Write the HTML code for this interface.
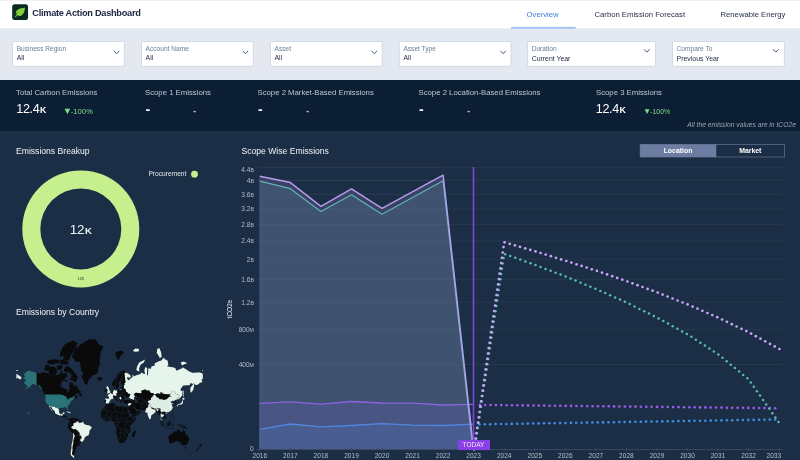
<!DOCTYPE html>
<html lang="en"><head><meta charset="utf-8"><title>Climate Action Dashboard</title>
<style>
*{box-sizing:border-box}
html,body{margin:0;padding:0}
body{width:800px;height:460px;overflow:hidden;position:relative;background:#1b2e45;font-family:"Liberation Sans", sans-serif;color:#fff;-webkit-font-smoothing:antialiased}
.abs{position:absolute}
#top{left:0;top:0;width:800px;height:28px;background:#fff;border-top:1px solid #eef0f4}
#fbar{left:0;top:28px;width:800px;height:52.3px;background:#e4e8f1}
#stat{left:0;top:80px;width:800px;height:51px;background:#0c1e33}
#main{left:0;top:131px;width:800px;height:329px;background:linear-gradient(#20344b 0,#1b2e45 3px,#1b2e45 100%)}
.title{left:32.3px;top:7.7px;font-size:9.2px;font-weight:bold;color:#1b2440;letter-spacing:-0.26px;white-space:nowrap;line-height:11px}
.tab{top:10.35px;font-size:7.7px;color:#27304a;white-space:nowrap;line-height:9px}
.flab{font-size:6.6px;line-height:8px;color:#6c7a9a;white-space:nowrap}
.fval{font-size:6.9px;line-height:8px;color:#1d2742;white-space:nowrap}
.slab{font-size:7.75px;line-height:9px;color:#bfc7d2;white-space:nowrap}
.sval{font-size:12.6px;line-height:16px;color:#fff;white-space:nowrap;letter-spacing:-0.35px}
.sck{font-size:8.8px;letter-spacing:0;font-weight:bold;margin-left:0.5px}
.sdel{font-size:7.6px;line-height:8px;color:#80dc84;white-space:nowrap}
.tri{font-size:9.4px;position:relative;top:-0.5px;margin-left:-1.1px;margin-right:-1.2px}
.note{right:4px;top:120.5px;font-size:6.75px;line-height:8px;font-style:italic;color:#9ba5b3;white-space:nowrap}
.h2{font-size:8.6px;line-height:10px;color:#f2f4f8;white-space:nowrap}
.tick{font-size:6.55px;line-height:8px;color:#b6becb;white-space:nowrap}
.xc{width:30px;text-align:center}
.sc{font-size:5.2px}
.tog{top:145.2px;height:12.6px;font-size:6.9px;font-weight:bold;line-height:12.4px;text-align:center;color:#fff}
#w{position:absolute;left:0;top:0;width:800px;height:460px;overflow:hidden;will-change:transform}
</style></head><body><div id="w">
<div id="top" class="abs"></div>
<div id="fbar" class="abs"></div>
<div id="stat" class="abs"></div>
<div id="main" class="abs"></div>

<svg class="abs" style="left:12px;top:4px" width="17" height="17" viewBox="0 0 17 17"><rect x="0.2" y="0.2" width="15.85" height="15.85" rx="2.5" fill="#0c2a22"/><path d="M13 3.8 C10.2 3.8 5.7 4.8 4.1 7.6 C3.4 8.8 3.7 9.8 4.7 10.4 L3 12.6 L3.7 13.2 L5.5 11.1 C6.7 12.4 8.8 12.3 10.4 10.8 C12.2 9.1 12.8 6.2 13 3.8 Z" fill="#7fd23c"/><path d="M3.9 8.9 L6.6 8.5 L4.4 9.6 Z" fill="#0c2a22"/></svg>
<div class="abs title">Climate Action Dashboard</div>
<div class="abs tab" style="left:526.6px;color:#3f7fd6">Overview</div>
<svg class="abs" style="left:0;top:24px" width="800" height="8" viewBox="0 24 800 8"><rect x="0" y="24" width="800" height="4.3" fill="#fff"/><rect x="511.2" y="26.9" width="64.5" height="1.8" fill="#9cc0f1"/></svg>
<div class="abs tab" style="left:594.5px">Carbon Emission Forecast</div>
<div class="abs tab" style="left:720.5px">Renewable Energy</div>
<svg class="abs" style="left:0;top:36px" width="800" height="36" viewBox="0 36 800 36"><rect x="12.60" y="41.5" width="111.75" height="24.8" rx="0.8" fill="#fff" stroke="#c3cfe0" stroke-width="0.7"/><path d="M114.00 51.10 L116.50 53.70 L119.00 51.10" fill="none" stroke="#44557f" stroke-width="1" stroke-linecap="round" stroke-linejoin="round"/><rect x="141.50" y="41.5" width="111.75" height="24.8" rx="0.8" fill="#fff" stroke="#c3cfe0" stroke-width="0.7"/><path d="M242.90 51.10 L245.40 53.70 L247.90 51.10" fill="none" stroke="#44557f" stroke-width="1" stroke-linecap="round" stroke-linejoin="round"/><rect x="270.40" y="41.5" width="111.75" height="24.8" rx="0.8" fill="#fff" stroke="#c3cfe0" stroke-width="0.7"/><path d="M371.80 51.10 L374.30 53.70 L376.80 51.10" fill="none" stroke="#44557f" stroke-width="1" stroke-linecap="round" stroke-linejoin="round"/><rect x="399.30" y="41.5" width="111.70" height="24.8" rx="0.8" fill="#fff" stroke="#c3cfe0" stroke-width="0.7"/><path d="M500.65 51.10 L503.15 53.70 L505.65 51.10" fill="none" stroke="#44557f" stroke-width="1" stroke-linecap="round" stroke-linejoin="round"/><rect x="527.60" y="41.5" width="127.90" height="24.8" rx="0.8" fill="#fff" stroke="#c3cfe0" stroke-width="0.7"/><path d="M644.40 49.60 L646.90 52.20 L649.40 49.60" fill="none" stroke="#44557f" stroke-width="1" stroke-linecap="round" stroke-linejoin="round"/><rect x="672.50" y="41.5" width="111.90" height="24.8" rx="0.8" fill="#fff" stroke="#c3cfe0" stroke-width="0.7"/><path d="M773.30 49.60 L775.80 52.20 L778.30 49.60" fill="none" stroke="#44557f" stroke-width="1" stroke-linecap="round" stroke-linejoin="round"/></svg><div class="abs flab" style="left:16.7px;top:44.6px">Business Region</div><div class="abs fval" style="left:16.7px;top:54.3px">All</div><div class="abs flab" style="left:145.6px;top:44.6px">Account Name</div><div class="abs fval" style="left:145.6px;top:54.3px">All</div><div class="abs flab" style="left:274.5px;top:44.6px">Asset</div><div class="abs fval" style="left:274.5px;top:54.3px">All</div><div class="abs flab" style="left:403.4px;top:44.6px">Asset Type</div><div class="abs fval" style="left:403.4px;top:54.3px">All</div><div class="abs flab" style="left:531.7px;top:44.6px">Duration</div><div class="abs fval" style="left:531.7px;top:54.8px">Current Year</div><div class="abs flab" style="left:676.6px;top:44.6px">Compare To</div><div class="abs fval" style="left:676.6px;top:54.8px">Previous Year</div>
<div class="abs slab" style="left:16px;top:87.5px">Total Carbon Emissions</div><div class="abs sval" style="left:16.3px;top:101.2px">12.4<span class="sck">K</span></div><div class="abs sdel" style="left:63.8px;top:107.2px;"><span class="tri">&#9660;</span>-100%</div><div class="abs slab" style="left:145px;top:87.5px">Scope 1 Emissions</div><div class="abs sval" style="left:145.5px;top:100.9px;font-weight:bold;font-size:14px;letter-spacing:0;color:#eef1f5">-</div><div class="abs sdel" style="left:193.1px;top:106.3px;font-size:10px;line-height:10px;color:#a9b1bb;font-weight:bold">-</div><div class="abs" style="left:189.5px;top:118px;width:50px;height:1px;background:rgba(255,255,255,0.018)"></div><div class="abs slab" style="left:257.5px;top:87.5px">Scope 2 Market-Based Emissions</div><div class="abs sval" style="left:258.0px;top:100.9px;font-weight:bold;font-size:14px;letter-spacing:0;color:#eef1f5">-</div><div class="abs sdel" style="left:306.1px;top:106.3px;font-size:10px;line-height:10px;color:#a9b1bb;font-weight:bold">-</div><div class="abs" style="left:302.5px;top:118px;width:50px;height:1px;background:rgba(255,255,255,0.018)"></div><div class="abs slab" style="left:418.5px;top:87.5px">Scope 2 Location-Based Emissions</div><div class="abs sval" style="left:419.0px;top:100.9px;font-weight:bold;font-size:14px;letter-spacing:0;color:#eef1f5">-</div><div class="abs sdel" style="left:467.1px;top:106.3px;font-size:10px;line-height:10px;color:#a9b1bb;font-weight:bold">-</div><div class="abs" style="left:463.5px;top:118px;width:50px;height:1px;background:rgba(255,255,255,0.018)"></div><div class="abs slab" style="left:596.0px;top:87.5px">Scope 3 Emissions</div><div class="abs sval" style="left:595.8px;top:101.2px">12.4<span class="sck">K</span></div><div class="abs sdel" style="left:644.1999999999999px;top:107.5px;font-size:6.9px;"><span class="tri" style="font-size:8.2px;top:0.3px;margin-right:-1px">&#9660;</span>-100%</div>
<div class="abs note">All the emission values are in tCO2e</div>

<div class="abs h2" style="left:16px;top:146px">Emissions Breakup</div>
<svg class="abs" style="left:0;top:160px" width="230" height="140" viewBox="0 160 230 140"><path d="M22.299999999999997 228.9 A58.5 58.5 0 1 0 139.3 228.9 A58.5 58.5 0 1 0 22.299999999999997 228.9 Z M40.3 228.9 A40.5 40.5 0 1 0 121.3 228.9 A40.5 40.5 0 1 0 40.3 228.9 Z" fill="#c6f08d" fill-rule="evenodd"/><circle cx="194.5" cy="174.2" r="3.4" fill="#c6f08d"/></svg>
<div class="abs" style="left:50.8px;top:220.9px;width:60px;text-align:center;font-size:13.4px;line-height:17px;color:#f1f3f6;letter-spacing:-0.1px">12<span style="font-size:9.6px;font-weight:bold;margin-left:0.5px">K</span></div>
<div class="abs" style="left:60.8px;top:276.3px;width:40px;text-align:center;font-size:3.9px;line-height:5px;color:#20301a">12<span style="font-size:3.2px">K</span></div>
<div class="abs" style="left:148.4px;top:170.3px;font-size:6.65px;line-height:8px;color:#e4e8ee;white-space:nowrap">Procurement</div>

<div class="abs h2" style="left:16px;top:307px">Emissions by Country</div>
<svg class="abs" style="left:0;top:330px" width="230" height="130" viewBox="0 330 230 130">
<path d="M36.6 372.8 L39.7 373.7 L43.3 372.2 L47.4 373.0 L50.0 374.4 L53.7 375.1 L57.8 375.1 L60.4 373.7 L60.9 369.1 L63.0 373.7 L65.6 373.0 L67.1 373.7 L67.6 376.5 L65.1 377.8 L64.5 379.6 L61.4 382.5 L60.6 385.7 L61.9 387.6 L65.6 389.0 L67.1 389.5 L67.1 391.7 L68.4 392.7 L68.7 390.4 L69.7 388.6 L69.2 386.2 L69.5 382.2 L71.8 382.5 L73.3 383.6 L73.6 385.9 L75.4 386.2 L76.2 384.4 L77.5 387.2 L78.5 389.0 L80.1 390.8 L80.7 392.1 L79.3 392.7 L78.5 393.6 L75.4 393.6 L73.9 394.9 L75.9 394.6 L76.2 395.7 L78.0 396.9 L76.4 398.0 L75.4 398.7 L74.9 397.6 L73.3 398.7 L73.1 399.9 L71.3 400.8 L70.5 402.4 L70.2 404.1 L68.9 405.1 L67.6 406.5 L68.0 409.2 L67.9 410.3 L67.2 409.5 L66.7 408.0 L65.8 407.4 L64.0 407.3 L63.0 407.9 L60.9 407.7 L59.3 408.9 L59.2 409.9 L58.9 411.8 L59.9 413.7 L60.6 414.2 L62.5 413.9 L62.7 412.6 L64.5 412.3 L64.3 414.0 L63.6 415.4 L66.1 415.5 L66.5 415.9 L66.2 418.0 L66.9 419.1 L68.4 418.8 L69.5 419.3 L69.2 419.9 L67.9 420.0 L66.6 419.4 L65.2 418.3 L64.3 417.0 L62.2 416.4 L60.6 415.2 L59.4 415.4 L57.3 414.6 L55.0 413.2 L55.0 411.8 L53.7 410.2 L52.4 408.9 L51.1 406.7 L50.1 406.4 L50.2 407.4 L51.3 409.2 L52.6 410.9 L52.9 411.5 L51.6 410.4 L50.3 408.6 L49.5 407.1 L48.9 405.9 L48.2 405.0 L47.1 404.6 L46.4 403.2 L45.5 401.4 L45.2 399.7 L45.4 396.9 L45.0 395.0 L45.9 394.6 L44.8 393.8 L43.6 392.9 L43.3 391.3 L42.1 389.8 L41.7 389.0 L40.4 387.6 L38.9 386.4 L37.1 384.9 L35.0 384.7 L32.9 384.1 L31.1 385.4 L29.8 387.2 L27.8 388.1 L25.7 389.5 L24.1 389.9 L25.7 388.6 L27.8 386.2 L25.7 384.7 L23.9 383.1 L24.6 381.4 L26.2 380.2 L23.6 378.4 L22.6 378.3 L24.6 377.1 L25.2 376.5 L23.6 374.4 L25.7 372.2 L28.5 370.2 L31.9 371.5Z" fill="#0a0a0a"/>
<path d="M45.9 394.6 L60.4 394.6 L63.5 395.3 L65.8 396.5 L66.9 397.4 L66.9 399.2 L68.7 399.2 L68.7 398.7 L70.0 398.3 L70.9 397.6 L72.6 397.6 L73.8 395.8 L74.5 396.1 L74.9 397.6 L73.3 398.7 L73.1 399.9 L71.3 400.8 L70.5 402.4 L70.2 404.1 L68.9 405.1 L67.6 406.5 L68.0 409.2 L67.9 410.3 L67.2 409.5 L66.7 408.0 L65.8 407.4 L64.0 407.3 L63.0 407.9 L60.9 407.7 L59.3 408.9 L59.2 409.9 L58.1 408.9 L57.0 407.6 L56.2 408.0 L55.5 407.7 L54.4 406.4 L53.6 406.4 L53.6 406.7 L52.1 406.7 L50.1 405.9 L48.9 405.9 L48.2 405.0 L47.1 404.6 L46.4 403.2 L45.5 401.4 L45.2 399.7 L45.4 396.9 L45.0 395.0Z" fill="#2a7479"/>
<path d="M36.6 372.8 L36.6 384.4 L37.6 384.7 L38.4 385.8 L39.7 385.2 L42.1 389.0 L41.7 389.5 L40.4 387.6 L38.9 386.4 L37.1 384.9 L35.0 384.7 L32.9 384.1 L31.1 385.4 L29.8 387.2 L27.8 388.1 L25.7 389.5 L24.1 389.9 L25.7 388.6 L27.8 386.2 L25.7 384.7 L23.9 383.1 L24.6 381.4 L26.2 380.2 L23.6 378.4 L22.6 378.3 L24.6 377.1 L25.2 376.5 L23.6 374.4 L25.7 372.2 L28.5 370.2 L31.9 371.5Z" fill="#2a7479"/>
<path d="M28.0 412.3 L29.3 412.9 L29.8 413.7 L28.5 414.0 L27.5 412.9Z" fill="#2a7479"/>
<path d="M27.6 412.3 L28.0 412.2 L28.0 412.5 L27.7 412.5Z" fill="#2a7479"/>
<path d="M48.9 405.9 L50.1 405.9 L52.1 406.7 L53.6 406.7 L53.6 406.4 L54.4 406.4 L55.5 407.7 L56.2 408.0 L57.0 407.6 L58.1 408.9 L59.2 409.9 L58.9 411.8 L59.9 413.7 L60.6 414.2 L62.5 413.9 L62.7 412.6 L64.5 412.3 L64.3 414.0 L63.9 414.1 L63.4 414.3 L62.5 414.7 L62.7 415.3 L61.8 416.1 L60.6 415.2 L59.4 415.4 L57.3 414.6 L55.0 413.2 L55.0 411.8 L53.7 410.2 L52.4 408.9 L51.1 406.7 L50.1 406.4 L50.2 407.4 L51.3 409.2 L52.6 410.9 L52.9 411.5 L51.6 410.4 L50.3 408.6 L49.5 407.1Z" fill="#e6f5ec"/>
<path d="M68.2 366.1 L70.8 368.2 L74.4 372.2 L77.5 376.5 L77.7 377.8 L75.9 382.0 L74.4 382.0 L72.3 380.2 L69.2 379.6 L71.3 377.8 L71.8 375.1 L69.2 372.2 L65.6 372.2 L63.5 370.7 L65.6 366.4Z" fill="#0a0a0a"/>
<path d="M48.5 370.2 L50.5 367.0 L53.7 366.6 L55.7 368.2 L57.3 372.2 L55.7 374.4 L51.6 374.9 L49.0 373.4Z" fill="#0a0a0a"/>
<path d="M44.3 369.1 L45.9 364.6 L49.5 365.5 L50.0 368.2 L48.0 370.4 L45.4 370.7Z" fill="#0a0a0a"/>
<path d="M63.0 360.4 L69.2 360.4 L70.8 355.6 L75.9 348.3 L77.5 342.9 L73.3 340.4 L65.6 343.7 L61.9 348.3 L64.0 354.3Z" fill="#0a0a0a"/>
<path d="M59.9 363.6 L61.9 364.4 L68.2 364.2 L68.4 361.9 L63.0 359.7 L59.9 360.4Z" fill="#0a0a0a"/>
<path d="M47.4 363.2 L51.6 364.4 L55.7 363.6 L58.8 363.6 L59.9 360.4 L55.7 359.3 L50.0 359.7 L47.4 360.9Z" fill="#0a0a0a"/>
<path d="M59.9 356.9 L64.0 355.6 L63.0 348.3 L60.4 351.4Z" fill="#0a0a0a"/>
<path d="M56.8 369.4 L59.9 369.9 L61.9 368.2 L62.5 365.5 L59.9 364.9 L56.8 365.9Z" fill="#0a0a0a"/>
<path d="M65.1 379.0 L67.6 380.2 L66.3 382.0 L64.5 380.8Z" fill="#0a0a0a"/>
<path d="M78.9 395.6 L80.9 396.3 L82.1 396.3 L82.3 394.9 L80.9 393.8 L80.6 392.5 L79.8 393.3Z" fill="#0a0a0a"/>
<path d="M71.8 356.4 L75.4 349.0 L81.1 344.0 L88.9 339.5 L95.1 339.1 L99.2 344.8 L103.4 346.6 L100.8 351.4 L99.8 359.3 L100.0 363.6 L98.2 368.2 L98.2 371.5 L96.1 374.4 L93.0 375.1 L90.4 378.0 L88.9 379.0 L87.3 384.5 L86.3 384.7 L84.7 383.6 L83.2 380.2 L81.6 376.5 L83.2 373.0 L81.1 370.7 L80.6 365.5 L79.6 362.1 L75.4 361.5 L73.9 359.3Z" fill="#0a0a0a"/>
<path d="M97.2 378.4 L98.2 377.3 L101.3 377.1 L102.6 378.8 L101.3 380.2 L99.2 380.8 L97.8 380.2Z" fill="#0a0a0a"/>
<path d="M65.6 412.1 L68.2 411.4 L70.8 412.8 L71.2 413.1 L69.4 413.2 L68.2 412.2Z" fill="#e6f5ec"/>
<path d="M71.1 414.0 L72.3 413.2 L74.2 413.9 L72.8 414.4Z" fill="#0a0a0a" fill-opacity="0.6"/>
<path d="M69.5 419.3 L70.2 418.8 L70.8 418.0 L72.3 417.4 L73.3 417.6 L74.4 418.2 L76.4 418.3 L77.5 418.2 L78.5 419.3 L80.1 420.6 L81.6 420.7 L82.9 421.5 L83.7 422.8 L83.7 423.8 L84.7 424.2 L86.5 425.0 L88.9 425.2 L90.4 426.3 L91.5 426.6 L91.6 427.9 L90.4 429.7 L89.4 430.8 L89.4 433.0 L88.4 435.4 L86.5 436.1 L84.5 437.7 L84.4 439.2 L82.7 441.6 L81.9 442.5 L80.3 443.0 L79.3 442.5 L80.1 444.1 L79.6 445.4 L77.5 445.7 L77.2 447.1 L75.9 447.1 L76.4 448.3 L75.7 449.9 L74.6 450.6 L75.4 452.2 L73.9 454.6 L74.1 455.8 L75.7 457.8 L74.4 458.6 L72.8 457.1 L71.3 455.8 L70.5 453.7 L70.8 451.4 L71.5 447.8 L71.4 445.1 L72.3 441.9 L72.6 440.1 L73.1 437.1 L73.2 433.4 L72.0 432.6 L70.1 431.1 L69.2 429.2 L67.5 426.1 L68.2 425.5 L67.6 424.3 L68.2 423.3 L68.8 423.0 L69.6 421.7 L69.5 420.1Z" fill="#0a0a0a"/>
<path d="M82.9 421.5 L83.7 422.8 L83.7 423.8 L84.7 424.2 L86.5 425.0 L88.9 425.2 L90.4 426.3 L91.5 426.6 L91.6 427.9 L90.4 429.7 L89.4 430.8 L89.4 433.0 L88.4 435.4 L86.5 436.1 L84.5 437.7 L84.4 439.2 L82.7 441.6 L81.9 442.3 L79.8 440.2 L80.7 439.0 L81.7 438.3 L81.3 437.5 L81.5 436.6 L80.8 435.6 L79.6 435.4 L79.6 434.3 L79.8 433.2 L79.3 432.3 L78.4 432.3 L78.3 431.0 L77.5 430.5 L75.8 429.5 L75.7 428.8 L73.6 429.5 L73.0 428.7 L71.8 428.6 L71.3 427.6 L71.8 426.3 L73.3 426.0 L73.4 424.4 L73.6 423.2 L74.9 422.8 L76.4 422.6 L76.2 421.6 L78.0 421.4 L78.4 421.1 L78.6 422.7 L80.1 422.8 L81.6 422.6 L82.7 421.8Z" fill="#e6f5ec"/>
<path d="M73.2 433.4 L73.1 437.1 L72.6 440.1 L72.3 441.9 L71.4 445.1 L71.5 447.8 L70.8 451.4 L70.5 453.7 L71.3 455.8 L72.8 457.1 L74.4 458.6 L74.1 455.8 L72.3 455.0 L72.0 452.9 L72.6 449.9 L72.4 447.8 L72.8 445.1 L73.3 443.1 L73.3 440.7 L74.1 438.3 L74.4 436.8 L74.9 435.9 L74.1 434.3 L73.6 433.0Z" fill="#e6f5ec"/>
<path d="M106.5 403.9 L108.6 404.3 L111.2 403.2 L114.8 402.9 L114.9 405.1 L117.6 406.1 L119.7 407.3 L120.0 405.9 L121.5 405.8 L122.5 406.5 L124.6 406.9 L126.3 406.7 L127.3 406.7 L127.7 407.7 L127.2 408.6 L127.0 408.6 L126.5 407.5 L128.0 410.9 L128.8 412.6 L128.9 413.8 L130.1 415.6 L132.0 417.2 L132.0 417.8 L132.9 418.3 L136.1 417.6 L135.9 418.8 L134.5 421.4 L133.2 422.7 L131.4 424.3 L130.6 425.0 L129.9 426.3 L130.1 427.4 L130.6 429.2 L130.6 431.6 L128.0 434.3 L128.0 436.6 L126.7 437.6 L126.6 439.2 L125.4 440.7 L123.6 442.4 L120.0 443.0 L119.1 442.5 L118.7 440.1 L117.4 438.0 L117.1 435.4 L115.7 432.7 L116.6 430.0 L116.0 426.9 L114.5 425.0 L114.4 423.2 L114.6 421.7 L112.7 421.5 L111.7 420.4 L110.1 420.6 L108.6 421.3 L105.7 421.5 L103.6 420.2 L102.7 419.1 L101.8 418.0 L100.9 417.2 L100.5 416.1 L101.2 415.1 L101.1 413.4 L100.8 412.6 L101.3 411.2 L102.1 409.8 L103.1 408.6 L104.4 407.7 L104.6 406.5 L106.1 405.0Z" fill="#0a0a0a"/>
<path d="M135.1 430.0 L135.8 431.9 L135.2 433.2 L134.2 437.1 L132.9 437.4 L132.1 436.0 L132.4 434.1 L132.7 432.3 L133.9 431.3Z" fill="#0a0a0a"/>
<path d="M104.9 403.1 L104.7 402.0 L105.0 400.1 L104.8 398.9 L105.5 398.5 L108.7 398.7 L109.0 396.9 L107.2 395.0 L108.8 394.9 L108.6 394.0 L109.7 394.0 L110.4 393.0 L111.4 392.6 L112.1 391.3 L113.2 390.7 L114.1 390.5 L113.8 389.0 L113.8 387.6 L115.0 387.0 L114.9 388.6 L114.7 389.5 L115.3 390.4 L117.0 390.4 L119.2 389.8 L119.9 390.0 L120.5 389.2 L120.5 387.6 L121.0 387.1 L121.8 387.6 L122.2 386.4 L121.8 385.5 L124.1 385.2 L125.1 384.7 L124.4 384.1 L122.5 384.5 L121.3 384.7 L120.6 383.6 L120.7 381.4 L122.5 379.0 L122.0 378.0 L121.0 378.4 L120.5 380.2 L118.7 382.5 L118.5 383.9 L119.3 384.7 L118.9 385.7 L118.1 387.6 L117.9 388.4 L117.0 389.1 L116.2 389.1 L116.1 388.3 L115.4 386.3 L115.3 385.7 L115.0 385.4 L114.5 385.9 L113.7 386.6 L113.0 386.6 L112.4 385.7 L112.2 383.6 L112.3 382.3 L114.0 380.8 L115.0 379.6 L116.1 377.8 L117.1 375.5 L117.9 374.3 L119.2 372.5 L121.0 371.8 L122.9 370.5 L124.1 370.7 L125.7 371.6 L125.6 372.5 L126.7 373.1 L128.2 373.4 L130.6 375.4 L130.8 376.9 L129.5 377.8 L127.0 376.9 L127.6 379.6 L128.8 380.4 L129.3 379.3 L130.3 379.5 L130.6 378.0 L132.4 377.5 L132.7 374.4 L133.4 375.1 L133.9 376.6 L137.3 374.7 L137.6 374.9 L140.7 373.7 L141.2 372.5 L143.3 373.4 L144.3 374.0 L145.1 373.7 L144.3 370.7 L145.1 367.3 L147.2 367.7 L147.2 370.7 L146.9 374.4 L147.9 375.8 L148.4 368.2 L151.0 368.7 L151.3 366.4 L154.7 365.5 L154.7 363.2 L158.8 361.3 L161.4 360.4 L163.5 357.6 L165.0 359.3 L167.6 360.4 L168.4 365.5 L166.6 365.9 L168.1 366.4 L170.7 367.0 L173.3 367.3 L175.4 368.2 L176.4 370.7 L178.0 369.9 L182.1 368.2 L182.6 367.3 L187.3 369.9 L188.3 370.9 L192.5 372.7 L193.5 372.8 L197.7 372.5 L198.2 372.2 L200.8 372.7 L202.8 373.7 L202.8 379.0 L202.1 379.6 L201.3 379.4 L202.6 382.0 L199.7 382.9 L197.9 384.7 L195.6 384.9 L194.3 383.6 L194.0 386.7 L193.5 388.6 L193.4 389.7 L192.5 391.1 L191.6 392.1 L190.8 392.9 L190.3 391.3 L190.3 388.1 L190.9 386.9 L192.4 385.2 L194.0 383.1 L192.5 383.9 L190.8 382.9 L189.6 385.2 L187.3 385.2 L184.7 385.4 L183.4 385.4 L182.1 386.9 L180.8 388.8 L180.6 390.4 L182.1 391.1 L182.8 391.3 L182.3 393.8 L182.4 394.9 L181.3 396.5 L179.8 398.3 L178.5 399.2 L177.3 399.5 L176.8 400.1 L175.6 401.2 L176.6 402.8 L176.6 404.1 L175.6 404.6 L175.0 404.6 L175.1 403.1 L174.3 402.4 L174.1 401.1 L172.7 400.6 L172.4 401.8 L172.9 400.8 L171.2 401.6 L170.6 402.0 L171.2 402.9 L173.1 403.0 L171.5 404.4 L172.3 405.9 L172.7 406.8 L172.8 407.7 L171.8 409.8 L170.5 411.1 L168.7 411.9 L166.8 412.5 L165.8 412.3 L164.5 413.4 L164.4 414.0 L166.0 415.6 L166.2 417.5 L165.0 418.3 L164.0 419.2 L164.0 418.5 L163.0 417.9 L161.9 416.9 L161.4 416.8 L161.0 418.3 L161.7 420.0 L163.2 421.7 L163.4 423.0 L162.1 422.3 L161.6 420.9 L160.5 419.3 L160.7 417.5 L160.2 415.6 L159.8 414.9 L158.4 415.4 L158.4 414.0 L157.3 412.6 L157.2 411.9 L155.7 412.2 L154.7 412.5 L154.4 413.2 L153.1 414.0 L151.1 415.7 L151.1 417.0 L150.9 418.4 L150.0 419.4 L149.6 419.5 L149.0 418.3 L148.3 416.7 L147.4 414.0 L147.3 412.6 L145.9 412.7 L145.3 411.9 L144.5 410.7 L144.0 410.2 L141.5 410.3 L139.3 410.0 L139.0 409.2 L137.6 409.4 L136.0 408.7 L135.5 407.4 L134.8 407.3 L134.5 407.6 L134.7 408.3 L135.5 409.4 L135.6 410.0 L136.3 409.9 L136.3 410.7 L137.6 410.9 L138.6 409.8 L138.9 410.7 L140.6 411.8 L139.9 413.0 L139.5 413.8 L138.2 414.5 L136.5 415.4 L134.7 416.4 L132.9 417.1 L132.1 417.1 L131.7 415.9 L131.6 415.1 L130.3 413.2 L129.5 411.2 L128.8 410.1 L127.7 408.6 L127.7 407.7 L127.4 406.7 L127.7 405.6 L128.1 404.1 L128.2 403.2 L127.5 403.3 L126.4 403.7 L125.4 403.4 L124.6 403.5 L123.8 403.1 L123.3 402.1 L123.3 401.1 L122.0 400.6 L121.5 400.9 L121.4 401.6 L122.0 402.4 L121.5 403.4 L120.8 403.2 L120.5 402.1 L119.7 400.8 L119.7 399.9 L119.2 399.4 L117.9 398.7 L117.1 397.4 L116.7 397.1 L116.0 397.4 L116.1 398.3 L116.9 399.4 L117.9 399.9 L119.1 401.0 L118.4 400.8 L118.1 401.4 L118.4 401.8 L117.9 402.4 L117.7 402.4 L117.9 401.1 L117.1 400.6 L116.1 400.1 L115.0 399.1 L114.9 398.4 L114.2 398.0 L113.5 398.5 L112.7 399.0 L111.9 398.7 L111.2 398.9 L111.3 399.8 L110.0 400.5 L109.5 401.4 L109.6 402.0 L109.2 402.6 L108.6 403.2 L107.3 403.4 L106.8 403.7 L106.3 403.2 L105.8 403.0 L104.9 403.1Z" fill="#0a0a0a"/>
<path d="M125.6 372.5 L126.7 373.1 L128.2 373.4 L130.6 375.4 L130.8 376.9 L129.5 377.8 L127.0 376.9 L127.6 379.6 L128.8 380.4 L129.3 379.3 L130.3 379.5 L130.6 378.0 L132.4 377.5 L132.7 374.4 L133.4 375.1 L133.9 376.6 L137.3 374.7 L137.6 374.9 L140.7 373.7 L141.2 372.5 L143.3 373.4 L144.3 374.0 L145.1 373.7 L144.3 370.7 L145.1 367.3 L147.2 367.7 L147.2 370.7 L146.9 374.4 L147.9 375.8 L148.4 368.2 L151.0 368.7 L151.3 366.4 L154.7 365.5 L154.7 363.2 L158.8 361.3 L161.4 360.4 L163.5 357.6 L165.0 359.3 L167.6 360.4 L168.4 365.5 L166.6 365.9 L168.1 366.4 L170.7 367.0 L173.3 367.3 L175.4 368.2 L176.4 370.7 L178.0 369.9 L182.1 368.2 L182.6 367.3 L187.3 369.9 L188.3 370.9 L192.5 372.7 L193.5 372.8 L197.7 372.5 L198.2 372.2 L200.8 372.7 L202.8 373.7 L202.8 379.0 L202.1 379.6 L201.3 379.4 L202.6 382.0 L199.7 382.9 L197.9 384.7 L195.6 384.9 L194.3 383.6 L194.0 386.7 L193.5 388.6 L193.4 389.7 L192.5 391.1 L191.6 392.1 L190.8 392.9 L190.3 391.3 L190.3 388.1 L190.9 386.9 L192.4 385.2 L194.0 383.1 L192.5 383.9 L190.8 382.9 L189.6 385.2 L187.3 385.2 L184.7 385.4 L183.4 385.4 L182.1 386.9 L180.8 388.8 L180.6 390.4 L182.1 391.1 L182.8 391.3 L182.3 393.8 L182.4 394.9 L181.3 396.5 L179.8 398.3 L178.5 399.2 L177.3 399.5 L177.3 399.5 L177.5 399.2 L177.6 397.7 L178.6 397.6 L179.5 395.0 L177.2 394.6 L175.6 393.8 L174.9 391.7 L173.6 390.8 L172.2 391.0 L171.7 391.4 L170.1 393.9 L167.6 394.2 L165.0 394.0 L162.4 393.5 L162.6 392.7 L160.5 392.1 L160.4 393.8 L157.3 393.2 L154.8 394.4 L152.9 392.9 L151.0 393.1 L149.5 390.9 L149.2 390.1 L147.7 390.4 L146.4 390.2 L145.3 389.2 L143.3 389.9 L141.4 390.4 L141.1 391.3 L141.5 392.1 L141.2 393.2 L139.6 392.9 L137.8 392.9 L135.9 392.4 L134.8 393.8 L134.2 393.5 L133.8 394.3 L133.9 395.1 L134.7 395.5 L135.0 396.5 L134.5 396.9 L133.9 398.0 L134.2 399.0 L134.7 399.9 L133.7 399.9 L132.9 399.4 L131.6 398.9 L130.2 398.7 L129.0 397.8 L128.8 397.4 L129.8 395.9 L129.4 396.0 L130.2 395.5 L130.3 394.1 L129.3 393.8 L128.0 393.4 L127.3 391.9 L126.4 391.9 L125.9 391.1 L125.6 388.9 L124.2 388.4 L123.8 387.2 L124.1 385.2 L125.1 384.7 L124.4 384.1 L124.0 384.1 L124.9 383.3 L125.9 381.5 L125.0 380.0 L125.2 378.2 L124.7 376.8 L125.1 375.7 L124.4 374.9 L124.6 373.7Z" fill="#e6f5ec"/>
<path d="M119.9 390.0 L120.5 389.2 L121.4 389.6 L121.3 390.1Z" fill="#e6f5ec"/>
<path d="M16.4 373.7 L17.9 374.7 L20.5 376.5 L21.7 377.8 L20.2 379.6 L18.9 378.7 L17.4 377.8 L16.4 379.0Z" fill="#e6f5ec"/>
<path d="M136.3 369.9 L137.1 366.4 L139.1 362.6 L142.2 360.9 L145.1 359.5 L143.8 362.6 L140.7 364.6 L139.1 368.2 L139.4 371.2 L138.1 371.2 L137.1 370.4Z" fill="#e6f5ec"/>
<path d="M157.3 349.0 L159.3 348.0 L161.1 352.3 L161.7 357.1 L159.8 357.9 L158.0 354.8 L156.7 352.9Z" fill="#e6f5ec"/>
<path d="M180.6 362.6 L183.7 361.5 L187.3 363.2 L184.7 364.0 L182.1 365.5Z" fill="#e6f5ec"/>
<path d="M202.1 369.9 L202.8 369.9 L202.8 371.0 L202.1 371.0Z" fill="#e6f5ec"/>
<path d="M183.2 390.1 L183.8 391.3 L183.9 393.8 L183.7 395.3 L183.9 396.3 L183.2 396.9 L183.2 395.3 L183.2 392.9Z" fill="#e6f5ec"/>
<path d="M132.9 350.5 L135.5 348.6 L139.1 349.0 L138.6 351.4 L134.5 351.7Z" fill="#e6f5ec"/>
<path d="M115.3 352.9 L117.4 351.4 L122.5 350.5 L123.6 352.9 L120.5 356.1 L118.9 359.3 L117.4 360.0 L116.3 356.9Z" fill="#0a0a0a"/>
<path d="M124.1 400.1 L125.7 400.3 L127.7 399.7 L129.5 400.4 L131.1 400.1 L131.1 399.2 L129.8 398.3 L128.8 397.4 L129.8 395.9 L127.7 396.7 L128.0 397.6 L127.0 398.0 L126.4 397.2 L125.6 396.5 L124.9 397.4 L124.4 398.5 L124.1 399.4Z" fill="#1c2d44"/>
<path d="M135.0 396.6 L136.0 396.1 L137.1 396.3 L137.1 397.4 L136.0 398.0 L135.8 399.4 L136.8 399.4 L137.0 400.3 L137.6 400.8 L137.1 401.8 L137.6 402.9 L136.3 403.3 L135.0 402.8 L135.0 401.8 L135.2 400.8 L134.5 399.7 L133.9 398.5 L133.9 397.6Z" fill="#1c2d44"/>
<path d="M106.8 393.8 L107.8 393.5 L110.3 392.8 L110.5 391.5 L109.7 391.3 L109.5 390.1 L108.7 388.9 L108.6 387.0 L107.5 387.1 L108.0 386.1 L107.0 386.1 L106.4 387.6 L106.8 389.0 L107.1 389.7 L108.0 389.7 L107.9 391.0 L107.2 391.0 L107.4 391.9 L106.9 392.3 L107.8 392.6Z" fill="#e6f5ec"/>
<path d="M104.4 392.3 L106.3 391.9 L106.5 390.8 L106.8 389.9 L106.4 389.3 L105.5 389.3 L104.4 390.2 L104.7 391.3Z" fill="#0a0a0a"/>
<path d="M108.7 398.7 L109.0 396.9 L107.2 395.0 L108.8 394.9 L108.6 394.0 L109.7 394.0 L110.4 393.0 L110.9 392.9 L111.8 393.8 L112.7 394.2 L113.8 394.6 L113.5 395.6 L112.7 396.6 L113.2 396.9 L113.2 398.2 L113.5 398.5 L112.7 399.0 L111.9 398.7 L111.2 398.9 L111.3 399.5 L110.4 399.4Z" fill="#e6f5ec"/>
<path d="M104.8 398.9 L105.5 398.5 L108.7 398.7 L110.4 399.4 L111.3 399.5 L111.3 399.8 L110.0 400.5 L109.5 401.4 L109.6 402.0 L109.2 402.6 L108.6 403.2 L107.3 403.4 L106.8 403.7 L106.3 403.2 L105.8 403.0 L105.7 402.4 L106.0 401.4 L106.2 400.1 L105.4 399.7Z" fill="#e6f5ec"/>
<path d="M112.7 392.9 L113.2 390.7 L114.1 390.5 L114.1 389.6 L114.7 389.7 L115.3 390.4 L117.0 390.4 L117.2 391.7 L117.4 392.9 L115.9 393.5 L116.7 394.8 L116.3 395.7 L114.8 395.8 L113.5 395.6 L113.8 394.6 L112.8 394.2Z" fill="#e6f5ec"/>
<path d="M119.4 397.0 L120.5 396.8 L121.4 398.0 L121.2 399.4 L120.2 399.5 L119.6 398.7Z" fill="#e6f5ec"/>
<path d="M128.1 403.9 L128.6 403.2 L131.5 403.0 L130.8 404.7 L129.7 405.4 L128.2 406.0Z" fill="#e6f5ec"/>
<path d="M144.9 411.2 L145.9 412.7 L147.3 412.6 L147.4 414.0 L148.3 416.7 L149.0 418.3 L149.6 419.5 L150.0 419.4 L150.9 418.4 L151.1 417.0 L151.1 415.7 L153.1 414.0 L154.4 413.2 L154.7 412.5 L155.7 412.2 L155.6 410.7 L155.3 409.5 L156.1 409.5 L157.3 409.3 L159.3 408.5 L159.8 408.7 L158.8 409.5 L157.9 410.9 L157.4 411.2 L157.0 410.7 L156.1 410.1 L155.2 408.9 L155.2 409.6 L153.6 409.4 L151.1 408.2 L151.6 407.3 L150.4 406.7 L150.3 405.9 L150.8 405.6 L150.0 404.1 L148.2 404.7 L147.9 405.6 L148.6 406.1 L148.1 406.8 L147.4 407.7 L146.1 408.6 L145.6 409.3 L146.0 410.1Z" fill="#e2f1e9"/>
<path d="M147.7 401.4 L148.4 400.8 L151.0 399.7 L151.1 397.6 L152.3 397.4 L152.6 395.9 L154.0 395.1 L154.8 394.4 L156.7 397.2 L159.1 398.2 L159.3 399.2 L161.9 399.3 L164.0 399.9 L166.6 399.2 L167.5 398.5 L168.5 397.6 L169.9 396.6 L171.7 396.3 L169.5 395.3 L170.1 393.9 L171.7 391.4 L172.2 391.0 L173.6 390.8 L174.9 391.7 L175.6 393.8 L177.2 394.6 L179.5 395.0 L178.6 397.6 L177.6 397.7 L177.5 399.2 L177.2 399.4 L175.9 399.7 L174.9 400.4 L174.0 401.1 L172.7 400.6 L172.4 401.8 L172.9 400.8 L171.2 401.6 L170.6 402.0 L171.2 402.9 L173.1 403.0 L171.5 404.4 L172.3 405.9 L172.7 406.8 L172.8 407.7 L171.8 409.8 L170.5 411.1 L168.7 411.9 L166.8 412.5 L165.8 412.3 L165.0 412.1 L164.2 411.4 L162.5 411.8 L162.1 412.5 L161.0 412.1 L160.8 410.9 L160.2 410.7 L160.7 408.9 L160.0 408.5 L159.3 408.0 L158.8 407.9 L157.3 408.7 L155.7 409.0 L155.6 408.6 L154.1 408.6 L151.8 407.3 L150.4 406.5 L150.7 405.9 L150.2 404.7 L150.0 404.1 L149.0 403.4 L148.3 403.0 L148.2 402.1Z" fill="#dcede4"/>
<path d="M166.1 413.2 L167.1 413.2 L166.7 414.1 L165.9 413.8Z" fill="#dcede4"/>
<path d="M172.3 410.3 L172.8 410.4 L172.2 412.1 L171.9 411.4Z" fill="#0a0a0a" fill-opacity="0.6"/>
<path d="M177.2 406.7 L177.9 405.3 L178.2 404.8 L179.5 404.7 L180.6 404.6 L181.6 404.4 L182.5 403.7 L183.1 401.8 L182.8 400.2 L182.1 400.4 L182.0 401.8 L181.3 402.9 L180.5 403.0 L180.0 403.9 L178.5 404.1 L177.5 404.8 L176.7 405.5Z" fill="#e6f5ec"/>
<path d="M182.1 399.7 L182.9 397.4 L184.9 398.7 L183.8 399.7 L182.6 399.4Z" fill="#e6f5ec"/>
<path d="M151.0 418.6 L152.0 419.9 L151.3 420.6 L150.9 419.9Z" fill="#0a0a0a" fill-opacity="0.7"/>
<path d="M159.0 420.9 L160.4 421.7 L163.2 424.3 L164.5 425.6 L164.4 426.8 L163.7 426.8 L161.9 425.0 L160.6 423.0Z" fill="#0a0a0a" fill-opacity="0.75"/>
<path d="M164.1 427.3 L165.8 427.2 L167.1 427.1 L168.9 427.8 L168.8 428.2 L165.5 427.8Z" fill="#0a0a0a" fill-opacity="0.6"/>
<path d="M166.1 423.0 L167.3 423.0 L168.1 422.1 L169.9 420.2 L171.2 421.0 L170.6 421.9 L170.7 423.2 L170.2 424.3 L169.7 425.7 L168.9 425.8 L167.4 425.5 L166.6 424.5 L166.1 423.6Z" fill="#0a0a0a" fill-opacity="0.85"/>
<path d="M171.5 423.5 L172.3 423.1 L174.3 423.0 L173.6 423.6 L172.3 423.5 L172.5 424.3 L173.5 424.3 L172.8 425.6 L173.2 426.3 L172.0 426.6 L171.5 425.6 L171.2 424.3Z" fill="#0a0a0a" fill-opacity="0.55"/>
<path d="M177.5 424.2 L179.0 424.2 L179.7 425.5 L181.1 424.6 L182.6 425.1 L184.7 426.0 L186.0 426.9 L186.3 428.1 L187.6 429.2 L185.7 428.9 L184.2 427.8 L183.2 428.5 L181.1 428.1 L181.1 426.9 L179.5 426.0 L178.5 425.8 L178.0 425.2Z" fill="#0a0a0a" fill-opacity="0.7"/>
<path d="M172.0 414.0 L172.9 414.1 L172.8 415.4 L173.8 417.0 L172.5 416.5 L171.9 416.0 L171.8 415.2Z" fill="#0a0a0a" fill-opacity="0.5"/>
<path d="M172.8 420.1 L173.8 419.3 L175.0 419.1 L175.0 420.5 L174.5 420.6 L173.8 420.4Z" fill="#0a0a0a" fill-opacity="0.5"/>
<path d="M172.8 417.6 L173.8 417.8 L174.6 418.0 L174.3 418.5 L173.3 418.8 L172.8 418.3Z" fill="#0a0a0a" fill-opacity="0.35"/>
<path d="M170.7 428.2 L173.3 428.1 L175.4 428.2 L173.8 429.1 L171.2 428.7Z" fill="#0a0a0a" fill-opacity="0.35"/>
<path d="M168.7 435.4 L168.4 437.7 L169.2 442.5 L170.7 443.1 L173.6 442.5 L176.4 441.1 L179.0 441.6 L181.0 443.5 L182.1 445.1 L184.5 445.3 L185.7 445.6 L187.3 444.6 L188.0 442.4 L189.1 439.2 L188.9 437.4 L187.0 435.4 L185.4 433.8 L185.0 431.5 L183.4 429.4 L182.9 430.8 L182.5 433.0 L180.6 432.0 L179.9 431.5 L180.5 430.1 L178.2 429.7 L177.2 430.3 L176.4 431.6 L174.3 431.3 L172.9 433.0 L171.2 434.3Z" fill="#0a0a0a"/>
<path d="M184.6 446.9 L186.4 447.0 L186.3 448.6 L185.2 448.9Z" fill="#0a0a0a" fill-opacity="0.8"/>
<path d="M199.1 442.8 L200.5 444.1 L202.1 444.9 L201.3 446.1 L200.4 447.5 L200.1 446.3 L199.6 445.9 L200.1 444.7Z" fill="#0a0a0a" fill-opacity="0.8"/>
<path d="M199.1 446.7 L199.9 447.6 L198.2 449.5 L197.9 450.6 L196.8 451.1 L195.8 450.5 L196.9 449.2 L198.2 448.0Z" fill="#0a0a0a" fill-opacity="0.8"/>
<path d="M16.4 369.9 L17.7 369.9 L17.7 371.0 L16.4 371.0Z" fill="#e6f5ec"/>
<path d="M160.7 418.5 L160.9 417.0 L160.5 415.7 L160.7 414.8 L160.3 414.0 L161.4 413.0 L161.9 414.4 L162.4 414.3 L163.5 414.1 L163.9 415.1 L164.2 416.2 L163.0 416.3 L162.7 417.2 L162.9 417.6 L161.9 416.9 L161.4 416.8 L161.0 418.3 L161.7 420.0 L162.4 420.6 L161.5 420.4 L160.5 419.3Z" fill="#e6f5ec"/>
<path d="M108.6 404.3 L108.8 406.2 L107.0 407.4 L105.1 408.2 L105.1 409.0" fill="none" stroke="#22405c" stroke-width="0.35" stroke-opacity="0.9"/>
<path d="M105.1 409.0 L105.1 409.8 L103.4 409.8 L103.4 411.2 L102.9 411.5 L102.9 412.5 L100.8 412.6" fill="none" stroke="#22405c" stroke-width="0.35" stroke-opacity="0.9"/>
<path d="M105.1 409.0 L102.9 408.8" fill="none" stroke="#22405c" stroke-width="0.35" stroke-opacity="0.9"/>
<path d="M105.1 409.0 L107.1 410.4 L110.1 412.6 L111.2 413.4 L111.8 413.6 L111.8 414.9 L111.4 415.6 L110.1 415.9 L109.7 415.9" fill="none" stroke="#22405c" stroke-width="0.35" stroke-opacity="0.9"/>
<path d="M107.1 410.4 L106.2 410.4 L106.8 415.1 L106.9 415.6 L104.7 415.7 L103.6 415.6 L103.3 416.0 L102.1 415.0 L101.2 415.1" fill="none" stroke="#22405c" stroke-width="0.35" stroke-opacity="0.9"/>
<path d="M114.1 403.2 L113.8 404.7 L113.5 405.1 L114.3 406.2 L114.5 407.3 L114.8 409.2 L114.7 409.5 L115.8 411.2" fill="none" stroke="#22405c" stroke-width="0.35" stroke-opacity="0.9"/>
<path d="M115.6 405.5 L114.9 406.4 L114.5 407.3" fill="none" stroke="#22405c" stroke-width="0.35" stroke-opacity="0.9"/>
<path d="M111.8 413.6 L112.7 413.2 L115.8 411.2 L117.4 411.5 L122.0 413.4 L122.0 413.2 L122.5 413.2 L122.5 412.1 L122.5 406.5" fill="none" stroke="#22405c" stroke-width="0.35" stroke-opacity="0.9"/>
<path d="M122.5 412.1 L128.7 412.1" fill="none" stroke="#22405c" stroke-width="0.35" stroke-opacity="0.9"/>
<path d="M117.4 411.5 L117.6 412.9 L117.6 414.9 L116.6 416.2 L116.6 416.6" fill="none" stroke="#22405c" stroke-width="0.35" stroke-opacity="0.9"/>
<path d="M122.0 413.4 L122.0 415.5 L121.3 416.4 L121.0 417.1 L121.5 418.0" fill="none" stroke="#22405c" stroke-width="0.35" stroke-opacity="0.9"/>
<path d="M111.5 417.6 L111.7 416.7 L113.2 417.0 L114.8 416.8 L116.6 416.6" fill="none" stroke="#22405c" stroke-width="0.35" stroke-opacity="0.9"/>
<path d="M109.7 415.9 L108.6 416.3 L107.4 416.9 L106.8 418.3" fill="none" stroke="#22405c" stroke-width="0.35" stroke-opacity="0.9"/>
<path d="M109.7 415.9 L110.1 416.8 L110.8 417.4 L111.5 417.6" fill="none" stroke="#22405c" stroke-width="0.35" stroke-opacity="0.9"/>
<path d="M106.8 418.3 L108.1 418.0 L109.6 418.0 L110.1 418.0 L110.8 417.4" fill="none" stroke="#22405c" stroke-width="0.35" stroke-opacity="0.9"/>
<path d="M108.2 418.8 L108.0 421.1" fill="none" stroke="#22405c" stroke-width="0.35" stroke-opacity="0.9"/>
<path d="M109.6 418.0 L110.2 420.6" fill="none" stroke="#22405c" stroke-width="0.35" stroke-opacity="0.9"/>
<path d="M110.1 418.0 L110.4 420.5" fill="none" stroke="#22405c" stroke-width="0.35" stroke-opacity="0.9"/>
<path d="M111.5 417.6 L111.0 420.4" fill="none" stroke="#22405c" stroke-width="0.35" stroke-opacity="0.9"/>
<path d="M105.7 421.5 L105.2 419.9 L105.5 419.3 L105.5 418.4 L106.8 418.3" fill="none" stroke="#22405c" stroke-width="0.35" stroke-opacity="0.9"/>
<path d="M105.5 418.4 L104.9 417.3 L103.7 417.3 L103.3 416.0" fill="none" stroke="#22405c" stroke-width="0.35" stroke-opacity="0.9"/>
<path d="M103.7 417.3 L102.5 417.2 L100.9 417.3" fill="none" stroke="#22405c" stroke-width="0.35" stroke-opacity="0.9"/>
<path d="M103.6 420.2 L104.3 419.3 L105.2 419.9" fill="none" stroke="#22405c" stroke-width="0.35" stroke-opacity="0.9"/>
<path d="M104.3 419.3 L103.9 418.5 L102.7 419.1" fill="none" stroke="#22405c" stroke-width="0.35" stroke-opacity="0.9"/>
<path d="M116.9 417.0 L116.6 418.5 L115.8 419.6 L114.0 421.3" fill="none" stroke="#22405c" stroke-width="0.35" stroke-opacity="0.9"/>
<path d="M116.9 417.0 L117.6 418.5 L117.4 419.9 L117.1 421.2 L117.9 422.6" fill="none" stroke="#22405c" stroke-width="0.35" stroke-opacity="0.9"/>
<path d="M117.6 419.9 L119.4 419.1 L121.5 418.0" fill="none" stroke="#22405c" stroke-width="0.35" stroke-opacity="0.9"/>
<path d="M114.7 422.6 L116.5 422.6 L117.9 422.6" fill="none" stroke="#22405c" stroke-width="0.35" stroke-opacity="0.9"/>
<path d="M117.9 422.6 L119.2 421.9 L119.2 421.4 L121.3 421.6 L122.5 421.1 L123.8 421.2" fill="none" stroke="#22405c" stroke-width="0.35" stroke-opacity="0.9"/>
<path d="M121.5 418.0 L122.0 419.2 L123.8 421.2" fill="none" stroke="#22405c" stroke-width="0.35" stroke-opacity="0.9"/>
<path d="M122.0 419.2 L124.1 418.8 L126.7 418.5 L127.2 418.8" fill="none" stroke="#22405c" stroke-width="0.35" stroke-opacity="0.9"/>
<path d="M129.5 414.3 L128.5 416.2 L127.7 418.0 L127.2 418.8 L126.7 419.6 L127.7 420.9 L128.2 421.4" fill="none" stroke="#22405c" stroke-width="0.35" stroke-opacity="0.9"/>
<path d="M128.5 416.2 L130.3 416.2 L131.6 417.2" fill="none" stroke="#22405c" stroke-width="0.35" stroke-opacity="0.9"/>
<path d="M131.7 418.0 L131.9 418.8 L134.5 419.6 L132.9 421.2 L131.4 421.6 L130.8 422.2" fill="none" stroke="#22405c" stroke-width="0.35" stroke-opacity="0.9"/>
<path d="M128.2 421.4 L129.3 421.9 L130.8 421.7 L130.8 422.2 L130.8 424.6" fill="none" stroke="#22405c" stroke-width="0.35" stroke-opacity="0.9"/>
<path d="M128.2 421.4 L127.2 421.6 L125.7 421.8 L125.6 421.9 L125.8 422.6 L125.0 424.5 L124.7 425.1 L124.8 426.1 L124.9 427.1 L125.6 428.1" fill="none" stroke="#22405c" stroke-width="0.35" stroke-opacity="0.9"/>
<path d="M127.2 421.6 L127.7 423.0 L127.2 424.3 L129.1 425.3 L129.9 426.2" fill="none" stroke="#22405c" stroke-width="0.35" stroke-opacity="0.9"/>
<path d="M127.2 424.3 L125.4 424.3" fill="none" stroke="#22405c" stroke-width="0.35" stroke-opacity="0.9"/>
<path d="M123.8 421.2 L125.6 421.9" fill="none" stroke="#22405c" stroke-width="0.35" stroke-opacity="0.9"/>
<path d="M125.6 428.1 L126.6 428.6 L127.2 428.7 L127.5 429.7 L129.0 429.9 L130.5 429.2" fill="none" stroke="#22405c" stroke-width="0.35" stroke-opacity="0.9"/>
<path d="M119.2 421.9 L118.8 424.0 L117.9 425.0 L117.5 426.0 L116.3 426.1 L115.9 426.8" fill="none" stroke="#22405c" stroke-width="0.35" stroke-opacity="0.9"/>
<path d="M116.5 422.6 L117.1 424.0 L116.9 425.0 L115.6 425.0 L115.3 425.8" fill="none" stroke="#22405c" stroke-width="0.35" stroke-opacity="0.9"/>
<path d="M115.9 426.8 L116.3 426.8 L118.2 426.8 L118.4 427.6 L119.7 427.4 L121.0 427.9 L121.0 429.5 L122.0 429.5 L122.0 430.5" fill="none" stroke="#22405c" stroke-width="0.35" stroke-opacity="0.9"/>
<path d="M122.0 429.5 L122.8 429.8 L123.7 429.8 L124.6 430.8 L125.0 430.1 L124.4 430.3 L124.5 428.2 L125.6 428.1" fill="none" stroke="#22405c" stroke-width="0.35" stroke-opacity="0.9"/>
<path d="M122.0 430.5 L121.0 430.5 L121.0 432.3 L121.7 433.0" fill="none" stroke="#22405c" stroke-width="0.35" stroke-opacity="0.9"/>
<path d="M115.7 432.9 L116.9 432.9 L118.9 432.9 L121.7 433.0 L122.7 433.1" fill="none" stroke="#22405c" stroke-width="0.35" stroke-opacity="0.9"/>
<path d="M122.7 433.1 L123.6 433.2 L124.6 432.1 L125.3 431.9 L126.7 431.1 L126.6 428.6" fill="none" stroke="#22405c" stroke-width="0.35" stroke-opacity="0.9"/>
<path d="M127.5 429.7 L128.1 431.3 L127.9 432.7 L127.4 431.3 L126.7 431.1" fill="none" stroke="#22405c" stroke-width="0.35" stroke-opacity="0.9"/>
<path d="M125.3 431.9 L126.6 432.5 L126.5 434.3 L125.8 435.7" fill="none" stroke="#22405c" stroke-width="0.35" stroke-opacity="0.9"/>
<path d="M122.7 433.1 L123.9 434.9 L124.8 435.5 L125.8 435.7 L126.2 436.8 L126.2 438.2 L126.6 438.2" fill="none" stroke="#22405c" stroke-width="0.35" stroke-opacity="0.9"/>
<path d="M120.5 433.4 L120.5 435.4 L120.0 435.4 L120.0 437.0" fill="none" stroke="#22405c" stroke-width="0.35" stroke-opacity="0.9"/>
<path d="M118.1 439.2 L120.0 439.1 L120.0 437.0 L120.5 438.2 L121.5 437.3 L122.8 437.5 L123.6 436.3 L124.8 435.5" fill="none" stroke="#22405c" stroke-width="0.35" stroke-opacity="0.9"/>
<path d="M123.6 439.8 L124.3 439.2 L124.8 439.8 L124.2 440.4 L123.6 439.8" fill="none" stroke="#22405c" stroke-width="0.35" stroke-opacity="0.9"/>
<path d="M115.6 385.7 L116.1 383.6 L115.9 381.4 L116.9 379.6 L117.6 377.4 L118.9 374.4 L120.2 373.7 L121.9 375.4 L122.0 378.0" fill="none" stroke="#22405c" stroke-width="0.35" stroke-opacity="0.9"/>
<path d="M120.2 373.7 L122.5 373.7 L123.1 372.2 L124.4 372.2 L124.6 373.7" fill="none" stroke="#22405c" stroke-width="0.35" stroke-opacity="0.9"/>
<path d="M117.4 392.9 L118.4 393.5 L119.4 394.2 L121.3 394.5 L122.0 393.2 L121.8 392.1 L121.8 390.4 L121.4 390.0" fill="none" stroke="#22405c" stroke-width="0.35" stroke-opacity="0.9"/>
<path d="M121.8 390.4 L122.9 390.2 L123.4 388.9 L124.2 388.4" fill="none" stroke="#22405c" stroke-width="0.35" stroke-opacity="0.9"/>
<path d="M120.5 388.5 L122.5 388.3 L123.4 388.9" fill="none" stroke="#22405c" stroke-width="0.35" stroke-opacity="0.9"/>
<path d="M122.2 386.8 L123.8 387.1" fill="none" stroke="#22405c" stroke-width="0.35" stroke-opacity="0.9"/>
<path d="M121.8 392.4 L123.6 392.5 L125.4 392.7 L126.2 392.0" fill="none" stroke="#22405c" stroke-width="0.35" stroke-opacity="0.9"/>
<path d="M121.3 394.5 L121.1 395.2 L122.3 395.4 L123.4 395.1 L124.2 397.2 L124.9 397.4" fill="none" stroke="#22405c" stroke-width="0.35" stroke-opacity="0.9"/>
<path d="M123.4 395.1 L124.6 395.3 L125.1 396.5 L124.2 397.2" fill="none" stroke="#22405c" stroke-width="0.35" stroke-opacity="0.9"/>
<path d="M121.1 395.2 L120.5 396.7" fill="none" stroke="#22405c" stroke-width="0.35" stroke-opacity="0.9"/>
<path d="M121.4 398.0 L122.0 398.5 L123.6 398.2 L124.4 398.5" fill="none" stroke="#22405c" stroke-width="0.35" stroke-opacity="0.9"/>
<path d="M121.2 399.5 L121.5 400.2 L123.1 400.2 L123.2 399.9 L124.1 399.7" fill="none" stroke="#22405c" stroke-width="0.35" stroke-opacity="0.9"/>
<path d="M116.7 394.8 L118.4 394.7 L118.4 395.3 L119.3 395.5 L121.1 395.2" fill="none" stroke="#22405c" stroke-width="0.35" stroke-opacity="0.9"/>
<path d="M118.4 395.3 L117.9 396.3 L116.7 396.5 L115.0 396.3 L114.5 395.7" fill="none" stroke="#22405c" stroke-width="0.35" stroke-opacity="0.9"/>
<path d="M115.0 396.3 L114.3 397.0 L113.2 396.9" fill="none" stroke="#22405c" stroke-width="0.35" stroke-opacity="0.9"/>
<path d="M116.7 397.2 L118.1 396.6 L119.4 397.0" fill="none" stroke="#22405c" stroke-width="0.35" stroke-opacity="0.9"/>
<path d="M117.9 397.4 L119.4 397.6 L119.6 398.7 L118.7 399.1 L117.9 397.4" fill="none" stroke="#22405c" stroke-width="0.35" stroke-opacity="0.9"/>
<path d="M111.8 392.6 L112.7 392.9" fill="none" stroke="#22405c" stroke-width="0.35" stroke-opacity="0.9"/>
<path d="M119.7 399.9 L120.2 399.5" fill="none" stroke="#22405c" stroke-width="0.35" stroke-opacity="0.9"/>
<path d="M120.2 400.4 L121.2 400.3 L121.2 399.5" fill="none" stroke="#22405c" stroke-width="0.35" stroke-opacity="0.9"/>
<path d="M104.9 399.7 L106.2 399.9" fill="none" stroke="#22405c" stroke-width="0.35" stroke-opacity="0.9"/>
<path d="M131.5 403.0 L132.8 403.0 L132.4 401.5 L132.8 401.3" fill="none" stroke="#22405c" stroke-width="0.35" stroke-opacity="0.9"/>
<path d="M131.1 400.1 L132.1 400.4 L132.8 401.3 L133.7 401.8 L134.5 401.4 L134.9 402.2" fill="none" stroke="#22405c" stroke-width="0.35" stroke-opacity="0.9"/>
<path d="M132.1 400.4 L133.7 399.9" fill="none" stroke="#22405c" stroke-width="0.35" stroke-opacity="0.9"/>
<path d="M131.5 403.0 L130.8 404.7" fill="none" stroke="#22405c" stroke-width="0.35" stroke-opacity="0.9"/>
<path d="M129.7 405.4 L129.9 406.1 L130.5 406.2 L131.4 406.8 L132.8 407.9 L133.7 408.0 L134.3 407.4" fill="none" stroke="#22405c" stroke-width="0.35" stroke-opacity="0.9"/>
<path d="M132.8 403.0 L133.4 403.9 L133.1 405.0 L134.4 406.4 L134.7 407.4" fill="none" stroke="#22405c" stroke-width="0.35" stroke-opacity="0.9"/>
<path d="M133.7 408.0 L134.3 408.3 L134.7 408.3" fill="none" stroke="#22405c" stroke-width="0.35" stroke-opacity="0.9"/>
<path d="M127.7 407.8 L128.2 407.9 L129.0 407.4 L128.8 406.5 L129.9 406.1" fill="none" stroke="#22405c" stroke-width="0.35" stroke-opacity="0.9"/>
<path d="M131.8 415.1 L132.1 414.5 L133.9 414.8 L134.5 414.2 L136.5 413.7 L138.1 413.2 L138.5 412.1 L138.2 411.7 L136.8 411.6 L136.3 410.8" fill="none" stroke="#22405c" stroke-width="0.35" stroke-opacity="0.9"/>
<path d="M136.5 413.7 L137.1 415.0" fill="none" stroke="#22405c" stroke-width="0.35" stroke-opacity="0.9"/>
<path d="M138.2 411.7 L138.6 410.8 L138.8 410.4" fill="none" stroke="#22405c" stroke-width="0.35" stroke-opacity="0.9"/>
<path d="M127.7 407.7 L128.0 406.5 L128.0 405.8 L128.1 405.4 L128.2 406.0" fill="none" stroke="#22405c" stroke-width="0.35" stroke-opacity="0.9"/>
<path d="M137.5 402.9 L139.2 402.3 L141.3 403.4 L140.9 405.2 L141.1 406.5 L141.6 406.6 L141.1 407.6 L142.1 409.1 L141.5 410.3" fill="none" stroke="#22405c" stroke-width="0.35" stroke-opacity="0.9"/>
<path d="M141.1 407.6 L143.9 407.5 L145.5 406.3 L145.6 405.0 L146.5 405.0 L146.7 403.4 L148.3 403.0" fill="none" stroke="#22405c" stroke-width="0.35" stroke-opacity="0.9"/>
<path d="M141.3 404.0 L143.0 403.5 L144.0 402.8 L144.8 403.1 L146.4 402.1 L146.7 403.3" fill="none" stroke="#22405c" stroke-width="0.35" stroke-opacity="0.9"/>
<path d="M136.8 399.9 L138.6 400.2 L138.6 397.6 L140.0 397.1 L141.2 398.1 L143.2 398.5 L143.8 399.0 L143.8 399.7 L144.8 400.4 L145.3 400.2 L146.4 399.5 L147.7 399.0 L148.4 399.1 L150.5 399.2 L151.1 399.6" fill="none" stroke="#22405c" stroke-width="0.35" stroke-opacity="0.9"/>
<path d="M138.6 400.2 L139.6 399.4 L140.7 399.6 L141.7 400.4 L143.0 401.8 L144.0 402.8" fill="none" stroke="#22405c" stroke-width="0.35" stroke-opacity="0.9"/>
<path d="M144.8 400.4 L146.4 401.4 L147.7 401.4" fill="none" stroke="#22405c" stroke-width="0.35" stroke-opacity="0.9"/>
<path d="M144.7 401.4 L146.4 401.4" fill="none" stroke="#22405c" stroke-width="0.35" stroke-opacity="0.9"/>
<path d="M160.7 418.5 L160.9 417.0 L160.5 415.7 L160.7 414.8 L160.3 414.0 L161.4 413.0 L162.1 412.5" fill="none" stroke="#22405c" stroke-width="0.35" stroke-opacity="0.9"/>
<path d="M161.4 413.0 L161.9 414.4 L162.4 414.3 L163.5 414.1 L163.9 415.1 L164.2 416.2 L163.0 416.3 L162.7 417.2 L162.9 417.6" fill="none" stroke="#22405c" stroke-width="0.35" stroke-opacity="0.9"/>
<path d="M162.5 411.8 L163.0 412.7 L163.7 413.0 L164.0 413.9 L165.0 415.2 L165.3 416.2 L165.3 417.3 L164.5 418.0 L163.7 418.3" fill="none" stroke="#22405c" stroke-width="0.35" stroke-opacity="0.9"/>
<path d="M164.2 416.2 L165.3 416.2" fill="none" stroke="#22405c" stroke-width="0.35" stroke-opacity="0.9"/>
<path d="M161.5 420.4 L162.4 420.6" fill="none" stroke="#22405c" stroke-width="0.35" stroke-opacity="0.9"/>
<path d="M175.2 402.6 L176.1 402.0" fill="none" stroke="#22405c" stroke-width="0.35" stroke-opacity="0.9"/>
<path d="M166.4 422.7 L167.1 423.2 L168.7 423.0 L169.4 421.6 L170.5 421.6" fill="none" stroke="#22405c" stroke-width="0.35" stroke-opacity="0.9"/>
<path d="M182.6 425.1 L182.6 428.5" fill="none" stroke="#22405c" stroke-width="0.35" stroke-opacity="0.9"/>
<path d="M157.4 411.2 L157.4 412.6 L158.4 414.0" fill="none" stroke="#22405c" stroke-width="0.35" stroke-opacity="0.9"/>
<path d="M157.4 411.2 L157.9 410.9 L158.6 410.3 L159.3 408.5" fill="none" stroke="#22405c" stroke-width="0.35" stroke-opacity="0.9"/>
<path d="M155.2 408.9 L155.6 408.6" fill="none" stroke="#22405c" stroke-width="0.35" stroke-opacity="0.9"/>
<path d="M155.7 409.3 L157.3 409.3 L157.3 408.7" fill="none" stroke="#22405c" stroke-width="0.35" stroke-opacity="0.9"/>
<path d="M72.6 417.5 L72.0 418.5 L72.1 420.0 L73.3 420.2 L74.6 420.5 L74.5 422.2 L74.9 422.8" fill="none" stroke="#22405c" stroke-width="0.35" stroke-opacity="0.9"/>
<path d="M68.8 423.0 L70.5 423.8 L71.5 424.9 L73.3 426.0" fill="none" stroke="#22405c" stroke-width="0.35" stroke-opacity="0.9"/>
<path d="M68.0 425.5 L68.7 426.3 L69.0 425.5 L70.5 423.8" fill="none" stroke="#22405c" stroke-width="0.35" stroke-opacity="0.9"/>
<path d="M73.6 429.5 L74.0 430.3 L73.9 431.9 L73.6 433.0" fill="none" stroke="#22405c" stroke-width="0.35" stroke-opacity="0.9"/>
<path d="M74.9 435.9 L76.3 435.9 L77.2 435.5 L77.5 434.2 L79.5 434.2 L79.6 434.3" fill="none" stroke="#22405c" stroke-width="0.35" stroke-opacity="0.9"/>
<path d="M77.2 435.5 L79.6 437.1 L79.8 438.5 L80.7 438.5 L81.3 437.5" fill="none" stroke="#22405c" stroke-width="0.35" stroke-opacity="0.9"/>
<path d="M79.8 440.2 L79.3 442.5" fill="none" stroke="#22405c" stroke-width="0.35" stroke-opacity="0.9"/>
<path d="M78.5 419.3 L77.8 420.6 L78.4 421.1" fill="none" stroke="#22405c" stroke-width="0.35" stroke-opacity="0.9"/>
<path d="M80.0 420.6 L79.8 422.0 L80.1 422.8" fill="none" stroke="#22405c" stroke-width="0.35" stroke-opacity="0.9"/>
<path d="M81.6 420.7 L81.4 422.2 L81.6 422.6" fill="none" stroke="#22405c" stroke-width="0.35" stroke-opacity="0.9"/>
<path d="M63.9 415.5 L63.4 416.2 L62.9 416.5" fill="none" stroke="#22405c" stroke-width="0.35" stroke-opacity="0.9"/>
<path d="M64.4 417.0 L65.2 416.5 L66.5 415.9" fill="none" stroke="#22405c" stroke-width="0.35" stroke-opacity="0.9"/>
<path d="M65.2 418.0 L66.2 418.1" fill="none" stroke="#22405c" stroke-width="0.35" stroke-opacity="0.9"/>
<path d="M66.6 419.5 L66.8 418.8" fill="none" stroke="#22405c" stroke-width="0.35" stroke-opacity="0.9"/>
<path d="M63.4 414.3 L63.4 415.4 L63.9 415.5" fill="none" stroke="#22405c" stroke-width="0.35" stroke-opacity="0.9"/>
<path d="M72.4 413.3 L72.5 414.3" fill="none" stroke="#22405c" stroke-width="0.35" stroke-opacity="0.9"/>
</svg>

<div class="abs h2" style="left:241.5px;top:146px">Scope Wise Emissions</div>
<svg class="abs" style="left:630px;top:140px" width="170" height="22" viewBox="630 140 170 22"><rect x="640.1" y="144.4" width="144.4" height="12.6" fill="none" stroke="#6f80a2" stroke-width="0.6"/><rect x="640.1" y="144.4" width="75.8" height="12.6" fill="#6c7da1"/><rect x="715.6" y="144.4" width="0.6" height="12.6" fill="#8796b3"/></svg>
<div class="abs tog" style="left:640px;width:76px">Location</div>
<div class="abs tog" style="left:716px;width:68.6px">Market</div>
<svg class="abs" style="left:0;top:0" width="800" height="460" viewBox="0 0 800 460">
<rect x="256.5" y="166.76" width="526.5" height="1" fill="#27394f"/>
<rect x="256.5" y="179.90" width="526.5" height="1" fill="#27394f"/>
<rect x="256.5" y="193.71" width="526.5" height="1" fill="#27394f"/>
<rect x="256.5" y="208.32" width="526.5" height="1" fill="#27394f"/>
<rect x="256.5" y="223.87" width="526.5" height="1" fill="#27394f"/>
<rect x="256.5" y="240.58" width="526.5" height="1" fill="#27394f"/>
<rect x="256.5" y="258.75" width="526.5" height="1" fill="#27394f"/>
<rect x="256.5" y="278.84" width="526.5" height="1" fill="#27394f"/>
<rect x="256.5" y="301.65" width="526.5" height="1" fill="#27394f"/>
<rect x="256.5" y="328.71" width="526.5" height="1" fill="#27394f"/>
<rect x="256.5" y="363.97" width="526.5" height="1" fill="#27394f"/>
<defs><clipPath id="cl"><polygon points="258.8,160.0 443.1,160.0 443.1,175.2 473.6,449.6 258.8,449.6"/></clipPath></defs>
<polygon points="259.3,176.3 259.8,176.3 290.4,182.6 320.9,206.3 351.5,188.9 382.0,208.3 443.1,175.2 473.6,449.6 473.6,449.6 259.3,449.6" fill="#3a4166"/>
<polygon points="259.3,181.1 259.8,181.1 290.4,188.7 320.9,211.5 351.5,194.8 382.0,214.3 443.1,180.7 473.0,449.6 473.0,449.6 259.3,449.6" fill="#3f526f"/>
<g clip-path="url(#cl)">
<polygon points="259.3,403.4 259.8,403.4 290.4,401.9 320.9,404.1 351.5,401.5 382.0,403.0 412.6,403.2 443.1,405.0 473.6,404.3 473.6,449.6 259.3,449.6" fill="#495583"/>
<polygon points="259.3,429.4 259.8,429.4 290.4,424.0 320.9,426.8 351.5,425.5 382.0,423.6 412.6,425.2 443.1,425.5 473.6,424.2 473.6,449.6 259.3,449.6" fill="#4a5d91"/>
</g>
<rect x="259.8" y="166.76" width="213.8" height="1" fill="#ffffff" opacity="0.04" clip-path="url(#cl)"/>
<rect x="259.8" y="179.90" width="213.8" height="1" fill="#ffffff" opacity="0.04" clip-path="url(#cl)"/>
<rect x="259.8" y="193.71" width="213.8" height="1" fill="#ffffff" opacity="0.04" clip-path="url(#cl)"/>
<rect x="259.8" y="208.32" width="213.8" height="1" fill="#ffffff" opacity="0.04" clip-path="url(#cl)"/>
<rect x="259.8" y="223.87" width="213.8" height="1" fill="#ffffff" opacity="0.04" clip-path="url(#cl)"/>
<rect x="259.8" y="240.58" width="213.8" height="1" fill="#ffffff" opacity="0.04" clip-path="url(#cl)"/>
<rect x="259.8" y="258.75" width="213.8" height="1" fill="#ffffff" opacity="0.04" clip-path="url(#cl)"/>
<rect x="259.8" y="278.84" width="213.8" height="1" fill="#ffffff" opacity="0.04" clip-path="url(#cl)"/>
<rect x="259.8" y="301.65" width="213.8" height="1" fill="#ffffff" opacity="0.04" clip-path="url(#cl)"/>
<rect x="259.8" y="328.71" width="213.8" height="1" fill="#ffffff" opacity="0.04" clip-path="url(#cl)"/>
<rect x="259.8" y="363.97" width="213.8" height="1" fill="#ffffff" opacity="0.04" clip-path="url(#cl)"/>
<rect x="256.5" y="449.10" width="526.5" height="1" fill="#3a4a63"/>
<rect x="259.30" y="448.10" width="1" height="3" fill="#3a4a63"/>
<rect x="289.85" y="448.10" width="1" height="3" fill="#3a4a63"/>
<rect x="320.40" y="448.10" width="1" height="3" fill="#3a4a63"/>
<rect x="350.95" y="448.10" width="1" height="3" fill="#3a4a63"/>
<rect x="381.50" y="448.10" width="1" height="3" fill="#3a4a63"/>
<rect x="412.05" y="448.10" width="1" height="3" fill="#3a4a63"/>
<rect x="442.60" y="448.10" width="1" height="3" fill="#3a4a63"/>
<rect x="473.15" y="448.10" width="1" height="3" fill="#3a4a63"/>
<rect x="503.70" y="448.10" width="1" height="3" fill="#3a4a63"/>
<rect x="534.25" y="448.10" width="1" height="3" fill="#3a4a63"/>
<rect x="564.80" y="448.10" width="1" height="3" fill="#3a4a63"/>
<rect x="595.35" y="448.10" width="1" height="3" fill="#3a4a63"/>
<rect x="625.90" y="448.10" width="1" height="3" fill="#3a4a63"/>
<rect x="656.45" y="448.10" width="1" height="3" fill="#3a4a63"/>
<rect x="687.00" y="448.10" width="1" height="3" fill="#3a4a63"/>
<rect x="717.55" y="448.10" width="1" height="3" fill="#3a4a63"/>
<rect x="748.10" y="448.10" width="1" height="3" fill="#3a4a63"/>
<rect x="778.65" y="448.10" width="1" height="3" fill="#3a4a63"/>
<polyline points="259.8,403.4 290.4,401.9 320.9,404.1 351.5,401.5 382.0,403.0 412.6,403.2 443.1,405.0 473.6,404.3" fill="none" stroke="#8c62e0" stroke-width="1.3" stroke-linejoin="round"/>
<polyline points="259.8,429.4 290.4,424.0 320.9,426.8 351.5,425.5 382.0,423.6 412.6,425.2 443.1,425.5 473.6,424.2" fill="none" stroke="#4f87e0" stroke-width="1.3" stroke-linejoin="round"/>
<polyline points="259.8,181.1 290.4,188.7 320.9,211.5 351.5,194.8 382.0,214.3 443.1,180.7 473.0,449.6" fill="none" stroke="#5fb5b5" stroke-width="1.2" stroke-linejoin="round"/>
<polyline points="259.8,176.3 290.4,182.6 320.9,206.3 351.5,188.9 382.0,208.3 443.1,175.2 473.6,449.6" fill="none" stroke="#b39dec" stroke-width="1.5" stroke-linejoin="round"/>
<rect x="472.70" y="167" width="1.6" height="282.6" fill="#8142dc"/>
<circle cx="479.8" cy="404.9" r="1.3" fill="#a05cf0"/><circle cx="485.1" cy="405.0" r="1.3" fill="#a05cf0"/><circle cx="490.5" cy="405.0" r="1.3" fill="#a05cf0"/><circle cx="495.9" cy="405.1" r="1.3" fill="#a05cf0"/><circle cx="501.2" cy="405.1" r="1.3" fill="#a05cf0"/><circle cx="506.6" cy="405.2" r="1.3" fill="#a05cf0"/><circle cx="512.0" cy="405.3" r="1.3" fill="#a05cf0"/><circle cx="517.4" cy="405.3" r="1.3" fill="#a05cf0"/><circle cx="522.7" cy="405.4" r="1.3" fill="#a05cf0"/><circle cx="528.1" cy="405.4" r="1.3" fill="#a05cf0"/><circle cx="533.5" cy="405.5" r="1.3" fill="#a05cf0"/><circle cx="538.8" cy="405.6" r="1.3" fill="#a05cf0"/><circle cx="544.2" cy="405.6" r="1.3" fill="#a05cf0"/><circle cx="549.6" cy="405.7" r="1.3" fill="#a05cf0"/><circle cx="555.0" cy="405.7" r="1.3" fill="#a05cf0"/><circle cx="560.3" cy="405.8" r="1.3" fill="#a05cf0"/><circle cx="565.7" cy="405.9" r="1.3" fill="#a05cf0"/><circle cx="571.1" cy="405.9" r="1.3" fill="#a05cf0"/><circle cx="576.4" cy="406.0" r="1.3" fill="#a05cf0"/><circle cx="581.8" cy="406.0" r="1.3" fill="#a05cf0"/><circle cx="587.2" cy="406.1" r="1.3" fill="#a05cf0"/><circle cx="592.6" cy="406.2" r="1.3" fill="#a05cf0"/><circle cx="597.9" cy="406.2" r="1.3" fill="#a05cf0"/><circle cx="603.3" cy="406.3" r="1.3" fill="#a05cf0"/><circle cx="608.7" cy="406.3" r="1.3" fill="#a05cf0"/><circle cx="614.0" cy="406.4" r="1.3" fill="#a05cf0"/><circle cx="619.4" cy="406.5" r="1.3" fill="#a05cf0"/><circle cx="624.8" cy="406.5" r="1.3" fill="#a05cf0"/><circle cx="630.2" cy="406.6" r="1.3" fill="#a05cf0"/><circle cx="635.5" cy="406.6" r="1.3" fill="#a05cf0"/><circle cx="640.9" cy="406.7" r="1.3" fill="#a05cf0"/><circle cx="646.3" cy="406.8" r="1.3" fill="#a05cf0"/><circle cx="651.6" cy="406.8" r="1.3" fill="#a05cf0"/><circle cx="657.0" cy="406.9" r="1.3" fill="#a05cf0"/><circle cx="662.4" cy="406.9" r="1.3" fill="#a05cf0"/><circle cx="667.8" cy="407.0" r="1.3" fill="#a05cf0"/><circle cx="673.1" cy="407.1" r="1.3" fill="#a05cf0"/><circle cx="678.5" cy="407.1" r="1.3" fill="#a05cf0"/><circle cx="683.9" cy="407.2" r="1.3" fill="#a05cf0"/><circle cx="689.3" cy="407.2" r="1.3" fill="#a05cf0"/><circle cx="694.6" cy="407.3" r="1.3" fill="#a05cf0"/><circle cx="700.0" cy="407.4" r="1.3" fill="#a05cf0"/><circle cx="705.4" cy="407.4" r="1.3" fill="#a05cf0"/><circle cx="710.7" cy="407.5" r="1.3" fill="#a05cf0"/><circle cx="716.1" cy="407.5" r="1.3" fill="#a05cf0"/><circle cx="721.5" cy="407.6" r="1.3" fill="#a05cf0"/><circle cx="726.9" cy="407.7" r="1.3" fill="#a05cf0"/><circle cx="732.2" cy="407.7" r="1.3" fill="#a05cf0"/><circle cx="737.6" cy="407.8" r="1.3" fill="#a05cf0"/><circle cx="743.0" cy="407.8" r="1.3" fill="#a05cf0"/><circle cx="748.3" cy="407.9" r="1.3" fill="#a05cf0"/><circle cx="753.7" cy="408.0" r="1.3" fill="#a05cf0"/><circle cx="759.1" cy="408.0" r="1.3" fill="#a05cf0"/><circle cx="764.5" cy="408.1" r="1.3" fill="#a05cf0"/><circle cx="769.8" cy="408.1" r="1.3" fill="#a05cf0"/><circle cx="775.2" cy="408.2" r="1.3" fill="#a05cf0"/>
<circle cx="479.4" cy="424.4" r="1.3" fill="#3f8ee8"/><circle cx="484.8" cy="424.3" r="1.3" fill="#3f8ee8"/><circle cx="490.2" cy="424.2" r="1.3" fill="#3f8ee8"/><circle cx="495.6" cy="424.1" r="1.3" fill="#3f8ee8"/><circle cx="501.0" cy="424.0" r="1.3" fill="#3f8ee8"/><circle cx="506.3" cy="424.0" r="1.3" fill="#3f8ee8"/><circle cx="511.7" cy="423.9" r="1.3" fill="#3f8ee8"/><circle cx="517.1" cy="423.8" r="1.3" fill="#3f8ee8"/><circle cx="522.5" cy="423.7" r="1.3" fill="#3f8ee8"/><circle cx="527.8" cy="423.6" r="1.3" fill="#3f8ee8"/><circle cx="533.2" cy="423.5" r="1.3" fill="#3f8ee8"/><circle cx="538.6" cy="423.4" r="1.3" fill="#3f8ee8"/><circle cx="544.0" cy="423.3" r="1.3" fill="#3f8ee8"/><circle cx="549.4" cy="423.2" r="1.3" fill="#3f8ee8"/><circle cx="554.7" cy="423.2" r="1.3" fill="#3f8ee8"/><circle cx="560.1" cy="423.1" r="1.3" fill="#3f8ee8"/><circle cx="565.5" cy="423.0" r="1.3" fill="#3f8ee8"/><circle cx="570.9" cy="422.9" r="1.3" fill="#3f8ee8"/><circle cx="576.2" cy="422.8" r="1.3" fill="#3f8ee8"/><circle cx="581.6" cy="422.7" r="1.3" fill="#3f8ee8"/><circle cx="587.0" cy="422.6" r="1.3" fill="#3f8ee8"/><circle cx="592.4" cy="422.5" r="1.3" fill="#3f8ee8"/><circle cx="597.8" cy="422.4" r="1.3" fill="#3f8ee8"/><circle cx="603.1" cy="422.4" r="1.3" fill="#3f8ee8"/><circle cx="608.5" cy="422.3" r="1.3" fill="#3f8ee8"/><circle cx="613.9" cy="422.2" r="1.3" fill="#3f8ee8"/><circle cx="619.3" cy="422.1" r="1.3" fill="#3f8ee8"/><circle cx="624.6" cy="422.0" r="1.3" fill="#3f8ee8"/><circle cx="630.0" cy="421.9" r="1.3" fill="#3f8ee8"/><circle cx="635.4" cy="421.8" r="1.3" fill="#3f8ee8"/><circle cx="640.8" cy="421.7" r="1.3" fill="#3f8ee8"/><circle cx="646.1" cy="421.6" r="1.3" fill="#3f8ee8"/><circle cx="651.5" cy="421.5" r="1.3" fill="#3f8ee8"/><circle cx="656.9" cy="421.5" r="1.3" fill="#3f8ee8"/><circle cx="662.3" cy="421.4" r="1.3" fill="#3f8ee8"/><circle cx="667.7" cy="421.3" r="1.3" fill="#3f8ee8"/><circle cx="673.0" cy="421.2" r="1.3" fill="#3f8ee8"/><circle cx="678.4" cy="421.1" r="1.3" fill="#3f8ee8"/><circle cx="683.8" cy="421.0" r="1.3" fill="#3f8ee8"/><circle cx="689.2" cy="420.9" r="1.3" fill="#3f8ee8"/><circle cx="694.5" cy="420.8" r="1.3" fill="#3f8ee8"/><circle cx="699.9" cy="420.7" r="1.3" fill="#3f8ee8"/><circle cx="705.3" cy="420.7" r="1.3" fill="#3f8ee8"/><circle cx="710.7" cy="420.6" r="1.3" fill="#3f8ee8"/><circle cx="716.1" cy="420.5" r="1.3" fill="#3f8ee8"/><circle cx="721.4" cy="420.4" r="1.3" fill="#3f8ee8"/><circle cx="726.8" cy="420.3" r="1.3" fill="#3f8ee8"/><circle cx="732.2" cy="420.2" r="1.3" fill="#3f8ee8"/><circle cx="737.6" cy="420.1" r="1.3" fill="#3f8ee8"/><circle cx="742.9" cy="420.0" r="1.3" fill="#3f8ee8"/><circle cx="748.3" cy="419.9" r="1.3" fill="#3f8ee8"/><circle cx="753.7" cy="419.9" r="1.3" fill="#3f8ee8"/><circle cx="759.1" cy="419.8" r="1.3" fill="#3f8ee8"/><circle cx="764.4" cy="419.7" r="1.3" fill="#3f8ee8"/><circle cx="769.8" cy="419.6" r="1.3" fill="#3f8ee8"/><circle cx="775.2" cy="419.5" r="1.3" fill="#3f8ee8"/>
<circle cx="474.4" cy="449.2" r="1.25" fill="#58beb2"/><circle cx="475.3" cy="443.9" r="1.25" fill="#58beb2"/><circle cx="476.1" cy="438.6" r="1.25" fill="#58beb2"/><circle cx="476.9" cy="433.3" r="1.25" fill="#58beb2"/><circle cx="477.7" cy="428.0" r="1.25" fill="#58beb2"/><circle cx="478.5" cy="422.7" r="1.25" fill="#58beb2"/><circle cx="479.3" cy="417.3" r="1.25" fill="#58beb2"/><circle cx="480.1" cy="412.0" r="1.25" fill="#58beb2"/><circle cx="480.9" cy="406.7" r="1.25" fill="#58beb2"/><circle cx="481.7" cy="401.4" r="1.25" fill="#58beb2"/><circle cx="482.5" cy="396.1" r="1.25" fill="#58beb2"/><circle cx="483.3" cy="390.8" r="1.25" fill="#58beb2"/><circle cx="484.1" cy="385.5" r="1.25" fill="#58beb2"/><circle cx="485.0" cy="380.2" r="1.25" fill="#58beb2"/><circle cx="485.8" cy="374.9" r="1.25" fill="#58beb2"/><circle cx="486.6" cy="369.6" r="1.25" fill="#58beb2"/><circle cx="487.4" cy="364.3" r="1.25" fill="#58beb2"/><circle cx="488.2" cy="358.9" r="1.25" fill="#58beb2"/><circle cx="489.0" cy="353.6" r="1.25" fill="#58beb2"/><circle cx="489.8" cy="348.3" r="1.25" fill="#58beb2"/><circle cx="490.6" cy="343.0" r="1.25" fill="#58beb2"/><circle cx="491.4" cy="337.7" r="1.25" fill="#58beb2"/><circle cx="492.2" cy="332.4" r="1.25" fill="#58beb2"/><circle cx="493.0" cy="327.1" r="1.25" fill="#58beb2"/><circle cx="493.8" cy="321.8" r="1.25" fill="#58beb2"/><circle cx="494.7" cy="316.5" r="1.25" fill="#58beb2"/><circle cx="495.5" cy="311.2" r="1.25" fill="#58beb2"/><circle cx="496.3" cy="305.9" r="1.25" fill="#58beb2"/><circle cx="497.1" cy="300.6" r="1.25" fill="#58beb2"/><circle cx="497.9" cy="295.2" r="1.25" fill="#58beb2"/><circle cx="498.7" cy="289.9" r="1.25" fill="#58beb2"/><circle cx="499.5" cy="284.6" r="1.25" fill="#58beb2"/><circle cx="500.3" cy="279.3" r="1.25" fill="#58beb2"/><circle cx="501.1" cy="274.0" r="1.25" fill="#58beb2"/><circle cx="501.9" cy="268.7" r="1.25" fill="#58beb2"/><circle cx="502.7" cy="263.4" r="1.25" fill="#58beb2"/><circle cx="503.5" cy="258.1" r="1.25" fill="#58beb2"/><circle cx="505.2" cy="254.2" r="1.25" fill="#58beb2"/><circle cx="510.2" cy="256.0" r="1.25" fill="#58beb2"/><circle cx="515.3" cy="257.8" r="1.25" fill="#58beb2"/><circle cx="520.3" cy="259.6" r="1.25" fill="#58beb2"/><circle cx="525.4" cy="261.4" r="1.25" fill="#58beb2"/><circle cx="530.5" cy="263.2" r="1.25" fill="#58beb2"/><circle cx="535.5" cy="265.1" r="1.25" fill="#58beb2"/><circle cx="540.5" cy="267.0" r="1.25" fill="#58beb2"/><circle cx="545.5" cy="268.9" r="1.25" fill="#58beb2"/><circle cx="550.6" cy="270.8" r="1.25" fill="#58beb2"/><circle cx="555.6" cy="272.7" r="1.25" fill="#58beb2"/><circle cx="560.6" cy="274.6" r="1.25" fill="#58beb2"/><circle cx="565.6" cy="276.6" r="1.25" fill="#58beb2"/><circle cx="570.6" cy="278.6" r="1.25" fill="#58beb2"/><circle cx="575.5" cy="280.6" r="1.25" fill="#58beb2"/><circle cx="580.5" cy="282.7" r="1.25" fill="#58beb2"/><circle cx="585.5" cy="284.7" r="1.25" fill="#58beb2"/><circle cx="590.4" cy="286.7" r="1.25" fill="#58beb2"/><circle cx="595.4" cy="288.8" r="1.25" fill="#58beb2"/><circle cx="600.3" cy="290.9" r="1.25" fill="#58beb2"/><circle cx="605.2" cy="293.1" r="1.25" fill="#58beb2"/><circle cx="610.1" cy="295.3" r="1.25" fill="#58beb2"/><circle cx="615.1" cy="297.5" r="1.25" fill="#58beb2"/><circle cx="620.0" cy="299.6" r="1.25" fill="#58beb2"/><circle cx="624.9" cy="301.8" r="1.25" fill="#58beb2"/><circle cx="629.7" cy="304.1" r="1.25" fill="#58beb2"/><circle cx="634.5" cy="306.5" r="1.25" fill="#58beb2"/><circle cx="639.4" cy="308.9" r="1.25" fill="#58beb2"/><circle cx="644.2" cy="311.2" r="1.25" fill="#58beb2"/><circle cx="649.0" cy="313.6" r="1.25" fill="#58beb2"/><circle cx="653.8" cy="315.9" r="1.25" fill="#58beb2"/><circle cx="658.6" cy="318.4" r="1.25" fill="#58beb2"/><circle cx="663.3" cy="321.0" r="1.25" fill="#58beb2"/><circle cx="668.0" cy="323.6" r="1.25" fill="#58beb2"/><circle cx="672.7" cy="326.2" r="1.25" fill="#58beb2"/><circle cx="677.4" cy="328.8" r="1.25" fill="#58beb2"/><circle cx="682.1" cy="331.4" r="1.25" fill="#58beb2"/><circle cx="686.8" cy="334.0" r="1.25" fill="#58beb2"/><circle cx="691.4" cy="336.8" r="1.25" fill="#58beb2"/><circle cx="695.9" cy="339.8" r="1.25" fill="#58beb2"/><circle cx="700.4" cy="342.7" r="1.25" fill="#58beb2"/><circle cx="704.9" cy="345.6" r="1.25" fill="#58beb2"/><circle cx="709.4" cy="348.5" r="1.25" fill="#58beb2"/><circle cx="713.9" cy="351.4" r="1.25" fill="#58beb2"/><circle cx="718.4" cy="354.4" r="1.25" fill="#58beb2"/><circle cx="722.5" cy="357.8" r="1.25" fill="#58beb2"/><circle cx="726.6" cy="361.2" r="1.25" fill="#58beb2"/><circle cx="730.8" cy="364.7" r="1.25" fill="#58beb2"/><circle cx="734.9" cy="368.1" r="1.25" fill="#58beb2"/><circle cx="739.1" cy="371.5" r="1.25" fill="#58beb2"/><circle cx="743.2" cy="374.9" r="1.25" fill="#58beb2"/><circle cx="747.4" cy="378.3" r="1.25" fill="#58beb2"/><circle cx="750.8" cy="382.4" r="1.25" fill="#58beb2"/><circle cx="753.8" cy="386.8" r="1.25" fill="#58beb2"/><circle cx="756.9" cy="391.2" r="1.25" fill="#58beb2"/><circle cx="760.0" cy="395.6" r="1.25" fill="#58beb2"/><circle cx="763.1" cy="400.0" r="1.25" fill="#58beb2"/><circle cx="766.2" cy="404.4" r="1.25" fill="#58beb2"/><circle cx="769.3" cy="408.8" r="1.25" fill="#58beb2"/><circle cx="772.3" cy="413.2" r="1.25" fill="#58beb2"/><circle cx="775.4" cy="417.6" r="1.25" fill="#58beb2"/><circle cx="778.5" cy="422.0" r="1.25" fill="#58beb2"/>
<circle cx="474.1" cy="449.2" r="1.35" fill="#c7a6f5"/><circle cx="474.9" cy="443.9" r="1.35" fill="#c7a6f5"/><circle cx="475.7" cy="438.6" r="1.35" fill="#c7a6f5"/><circle cx="476.5" cy="433.2" r="1.35" fill="#c7a6f5"/><circle cx="477.2" cy="427.9" r="1.35" fill="#c7a6f5"/><circle cx="478.0" cy="422.6" r="1.35" fill="#c7a6f5"/><circle cx="478.8" cy="417.3" r="1.35" fill="#c7a6f5"/><circle cx="479.6" cy="412.0" r="1.35" fill="#c7a6f5"/><circle cx="480.3" cy="406.7" r="1.35" fill="#c7a6f5"/><circle cx="481.1" cy="401.3" r="1.35" fill="#c7a6f5"/><circle cx="481.9" cy="396.0" r="1.35" fill="#c7a6f5"/><circle cx="482.6" cy="390.7" r="1.35" fill="#c7a6f5"/><circle cx="483.4" cy="385.4" r="1.35" fill="#c7a6f5"/><circle cx="484.2" cy="380.1" r="1.35" fill="#c7a6f5"/><circle cx="485.0" cy="374.8" r="1.35" fill="#c7a6f5"/><circle cx="485.7" cy="369.4" r="1.35" fill="#c7a6f5"/><circle cx="486.5" cy="364.1" r="1.35" fill="#c7a6f5"/><circle cx="487.3" cy="358.8" r="1.35" fill="#c7a6f5"/><circle cx="488.0" cy="353.5" r="1.35" fill="#c7a6f5"/><circle cx="488.8" cy="348.2" r="1.35" fill="#c7a6f5"/><circle cx="489.6" cy="342.9" r="1.35" fill="#c7a6f5"/><circle cx="490.4" cy="337.5" r="1.35" fill="#c7a6f5"/><circle cx="491.1" cy="332.2" r="1.35" fill="#c7a6f5"/><circle cx="491.9" cy="326.9" r="1.35" fill="#c7a6f5"/><circle cx="492.7" cy="321.6" r="1.35" fill="#c7a6f5"/><circle cx="493.4" cy="316.3" r="1.35" fill="#c7a6f5"/><circle cx="494.2" cy="311.0" r="1.35" fill="#c7a6f5"/><circle cx="495.0" cy="305.6" r="1.35" fill="#c7a6f5"/><circle cx="495.8" cy="300.3" r="1.35" fill="#c7a6f5"/><circle cx="496.5" cy="295.0" r="1.35" fill="#c7a6f5"/><circle cx="497.3" cy="289.7" r="1.35" fill="#c7a6f5"/><circle cx="498.1" cy="284.4" r="1.35" fill="#c7a6f5"/><circle cx="498.9" cy="279.1" r="1.35" fill="#c7a6f5"/><circle cx="499.6" cy="273.7" r="1.35" fill="#c7a6f5"/><circle cx="500.4" cy="268.4" r="1.35" fill="#c7a6f5"/><circle cx="501.2" cy="263.1" r="1.35" fill="#c7a6f5"/><circle cx="501.9" cy="257.8" r="1.35" fill="#c7a6f5"/><circle cx="502.7" cy="252.5" r="1.35" fill="#c7a6f5"/><circle cx="503.5" cy="247.1" r="1.35" fill="#c7a6f5"/><circle cx="504.6" cy="242.3" r="1.35" fill="#c7a6f5"/><circle cx="509.7" cy="243.8" r="1.35" fill="#c7a6f5"/><circle cx="514.9" cy="245.3" r="1.35" fill="#c7a6f5"/><circle cx="520.0" cy="246.9" r="1.35" fill="#c7a6f5"/><circle cx="525.2" cy="248.4" r="1.35" fill="#c7a6f5"/><circle cx="530.3" cy="249.9" r="1.35" fill="#c7a6f5"/><circle cx="535.5" cy="251.4" r="1.35" fill="#c7a6f5"/><circle cx="540.6" cy="253.0" r="1.35" fill="#c7a6f5"/><circle cx="545.7" cy="254.6" r="1.35" fill="#c7a6f5"/><circle cx="550.9" cy="256.2" r="1.35" fill="#c7a6f5"/><circle cx="556.0" cy="257.8" r="1.35" fill="#c7a6f5"/><circle cx="561.1" cy="259.4" r="1.35" fill="#c7a6f5"/><circle cx="566.3" cy="261.0" r="1.35" fill="#c7a6f5"/><circle cx="571.4" cy="262.6" r="1.35" fill="#c7a6f5"/><circle cx="576.5" cy="264.3" r="1.35" fill="#c7a6f5"/><circle cx="581.6" cy="265.9" r="1.35" fill="#c7a6f5"/><circle cx="586.7" cy="267.6" r="1.35" fill="#c7a6f5"/><circle cx="591.8" cy="269.3" r="1.35" fill="#c7a6f5"/><circle cx="596.9" cy="270.9" r="1.35" fill="#c7a6f5"/><circle cx="602.0" cy="272.7" r="1.35" fill="#c7a6f5"/><circle cx="607.1" cy="274.4" r="1.35" fill="#c7a6f5"/><circle cx="612.2" cy="276.2" r="1.35" fill="#c7a6f5"/><circle cx="617.2" cy="277.9" r="1.35" fill="#c7a6f5"/><circle cx="622.3" cy="279.7" r="1.35" fill="#c7a6f5"/><circle cx="627.4" cy="281.5" r="1.35" fill="#c7a6f5"/><circle cx="632.4" cy="283.3" r="1.35" fill="#c7a6f5"/><circle cx="637.5" cy="285.2" r="1.35" fill="#c7a6f5"/><circle cx="642.5" cy="287.0" r="1.35" fill="#c7a6f5"/><circle cx="647.6" cy="288.9" r="1.35" fill="#c7a6f5"/><circle cx="652.6" cy="290.7" r="1.35" fill="#c7a6f5"/><circle cx="657.7" cy="292.6" r="1.35" fill="#c7a6f5"/><circle cx="662.6" cy="294.6" r="1.35" fill="#c7a6f5"/><circle cx="667.6" cy="296.5" r="1.35" fill="#c7a6f5"/><circle cx="672.6" cy="298.5" r="1.35" fill="#c7a6f5"/><circle cx="677.6" cy="300.5" r="1.35" fill="#c7a6f5"/><circle cx="682.6" cy="302.5" r="1.35" fill="#c7a6f5"/><circle cx="687.6" cy="304.4" r="1.35" fill="#c7a6f5"/><circle cx="692.6" cy="306.6" r="1.35" fill="#c7a6f5"/><circle cx="697.5" cy="308.7" r="1.35" fill="#c7a6f5"/><circle cx="702.4" cy="310.8" r="1.35" fill="#c7a6f5"/><circle cx="707.4" cy="313.0" r="1.35" fill="#c7a6f5"/><circle cx="712.3" cy="315.1" r="1.35" fill="#c7a6f5"/><circle cx="717.2" cy="317.2" r="1.35" fill="#c7a6f5"/><circle cx="722.1" cy="319.5" r="1.35" fill="#c7a6f5"/><circle cx="726.9" cy="321.8" r="1.35" fill="#c7a6f5"/><circle cx="731.8" cy="324.2" r="1.35" fill="#c7a6f5"/><circle cx="736.6" cy="326.5" r="1.35" fill="#c7a6f5"/><circle cx="741.5" cy="328.8" r="1.35" fill="#c7a6f5"/><circle cx="746.3" cy="331.1" r="1.35" fill="#c7a6f5"/><circle cx="751.1" cy="333.6" r="1.35" fill="#c7a6f5"/><circle cx="755.8" cy="336.2" r="1.35" fill="#c7a6f5"/><circle cx="760.5" cy="338.7" r="1.35" fill="#c7a6f5"/><circle cx="765.2" cy="341.3" r="1.35" fill="#c7a6f5"/><circle cx="770.0" cy="343.9" r="1.35" fill="#c7a6f5"/><circle cx="774.7" cy="346.4" r="1.35" fill="#c7a6f5"/><circle cx="779.4" cy="349.0" r="1.35" fill="#c7a6f5"/>
</svg>
<div class="abs" style="left:457.5px;top:440px;width:32px;height:9.8px;background:#8a3fe6;color:#f0e4ff;font-size:6.5px;line-height:10.2px;text-align:center">TODAY</div>
<div class="abs" style="left:225.7px;top:304.9px;width:8px;height:8px"><div style="position:absolute;left:50%;top:50%;transform:translate(-50%,-50%) rotate(-90deg);font-size:6.5px;line-height:8px;color:#eef1f5;white-space:nowrap;letter-spacing:0px">tCO2e</div></div>
<div class="abs tick" style="right:546.1px;top:166.1px">4.4<span class="sc">B</span></div><div class="abs tick" style="right:546.1px;top:176.7px">4<span class="sc">B</span></div><div class="abs tick" style="right:546.1px;top:190.5px">3.6<span class="sc">B</span></div><div class="abs tick" style="right:546.1px;top:205.1px">3.2<span class="sc">B</span></div><div class="abs tick" style="right:546.1px;top:220.7px">2.8<span class="sc">B</span></div><div class="abs tick" style="right:546.1px;top:237.4px">2.4<span class="sc">B</span></div><div class="abs tick" style="right:546.1px;top:255.5px">2<span class="sc">B</span></div><div class="abs tick" style="right:546.1px;top:275.6px">1.6<span class="sc">B</span></div><div class="abs tick" style="right:546.1px;top:298.5px">1.2<span class="sc">B</span></div><div class="abs tick" style="right:546.1px;top:325.5px">800<span class="sc">M</span></div><div class="abs tick" style="right:546.1px;top:360.8px">400<span class="sc">M</span></div><div class="abs tick" style="right:546.4px;top:444.8px">0</div>
<div class="abs tick xc" style="left:244.8px;top:451.7px">2016</div><div class="abs tick xc" style="left:275.4px;top:451.7px">2017</div><div class="abs tick xc" style="left:305.9px;top:451.7px">2018</div><div class="abs tick xc" style="left:336.5px;top:451.7px">2019</div><div class="abs tick xc" style="left:367.0px;top:451.7px">2020</div><div class="abs tick xc" style="left:397.6px;top:451.7px">2021</div><div class="abs tick xc" style="left:428.1px;top:451.7px">2022</div><div class="abs tick xc" style="left:458.6px;top:451.7px">2023</div><div class="abs tick xc" style="left:489.2px;top:451.7px">2024</div><div class="abs tick xc" style="left:519.8px;top:451.7px">2025</div><div class="abs tick xc" style="left:550.3px;top:451.7px">2026</div><div class="abs tick xc" style="left:580.9px;top:451.7px">2027</div><div class="abs tick xc" style="left:611.4px;top:451.7px">2028</div><div class="abs tick xc" style="left:642.0px;top:451.7px">2029</div><div class="abs tick xc" style="left:672.5px;top:451.7px">2030</div><div class="abs tick xc" style="left:703.0px;top:451.7px">2031</div><div class="abs tick xc" style="left:733.6px;top:451.7px">2032</div><div class="abs tick xc" style="left:758.8px;top:451.7px">2033</div>
</div></body></html>
